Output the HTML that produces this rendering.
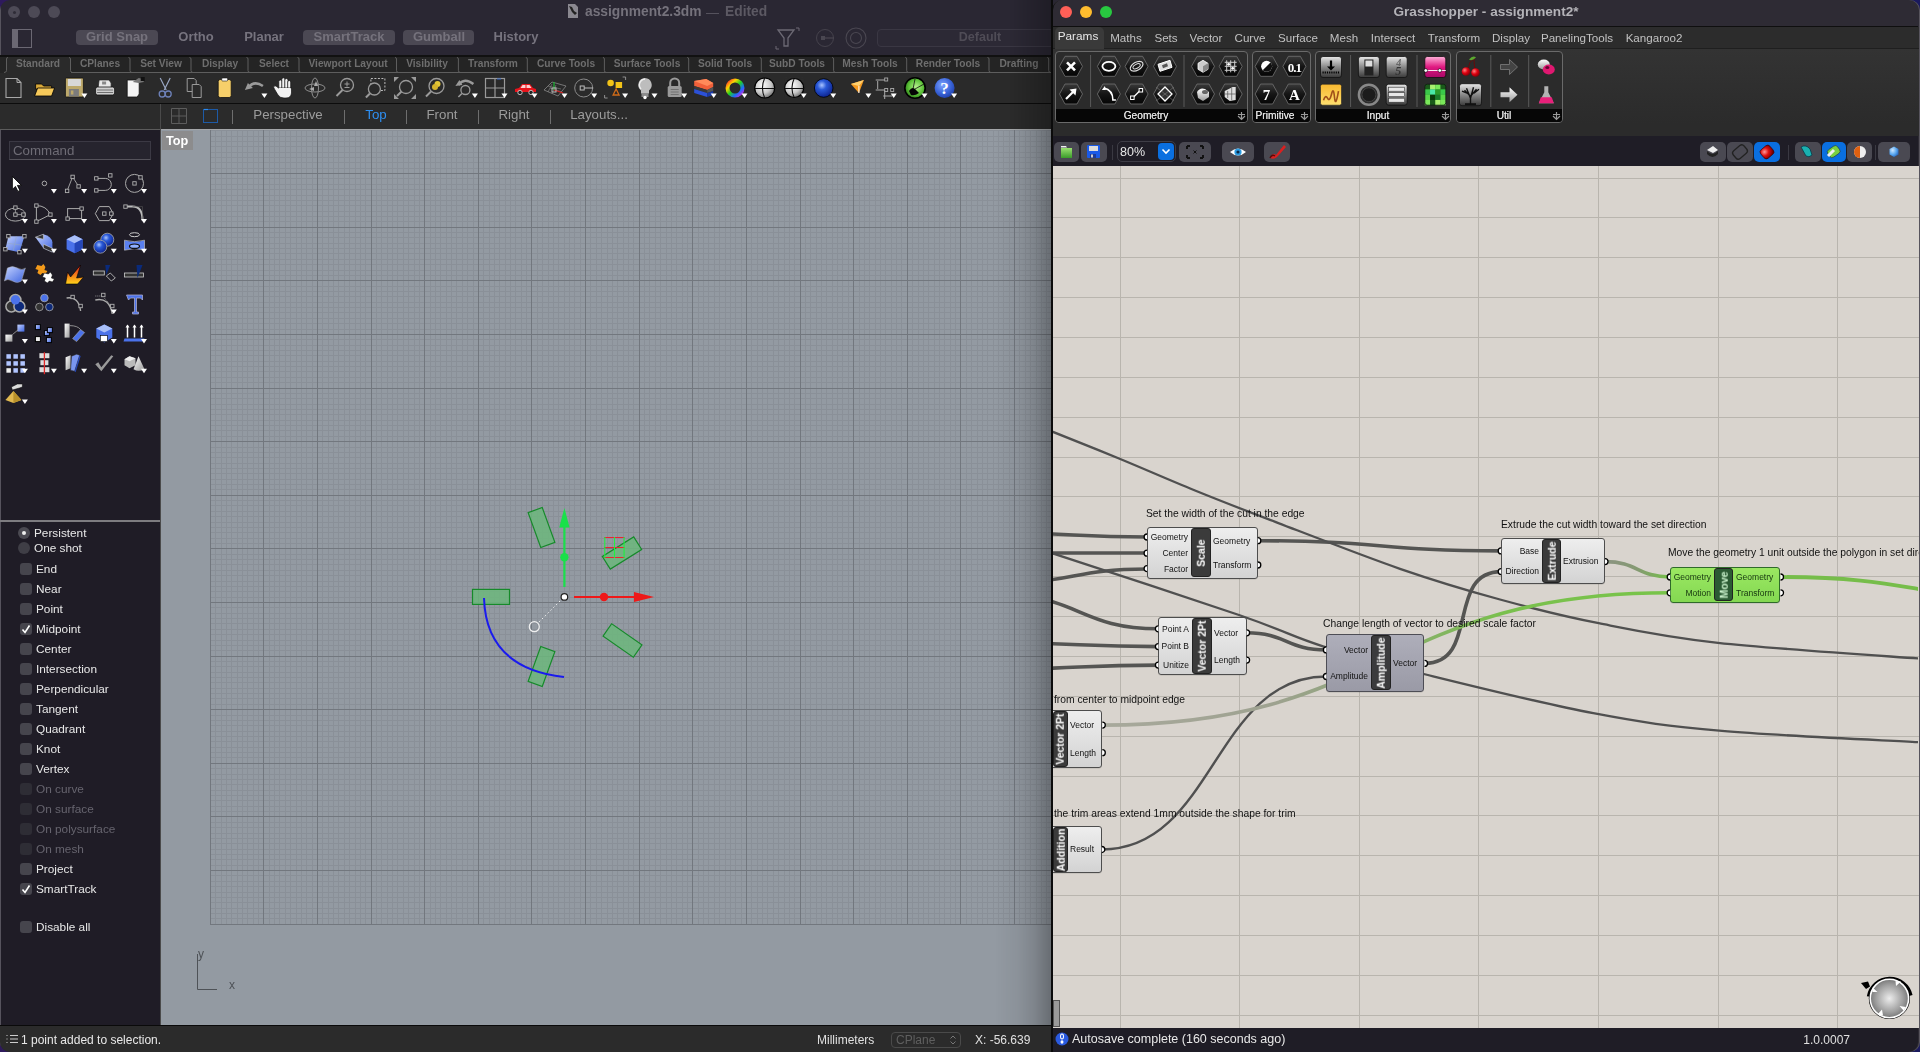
<!DOCTYPE html>
<html><head><meta charset="utf-8"><title>Rhino + Grasshopper</title>
<style>
*{margin:0;padding:0;box-sizing:border-box}
html,body{width:1920px;height:1055px;overflow:hidden;background:#fff;font-family:"Liberation Sans", sans-serif}
.a{position:absolute}
.t{position:absolute;white-space:nowrap;will-change:transform}
</style></head><body>

<div class="a" style="left:0;top:0;width:1070px;height:1052px;background:#2e1a5c"></div>
<div class="a" style="left:0;top:0;width:1070px;height:1052px;background:#2a2733;border-radius:10px;overflow:hidden">
<div class="a" style="left:0;top:0;width:1px;height:1052px;background:#56535d"></div>
<div class="a" style="left:8px;top:6px;width:12px;height:12px;border-radius:6px;background:#4d4a56"></div>
<div class="a" style="left:28px;top:6px;width:12px;height:12px;border-radius:6px;background:#4d4a56"></div>
<div class="a" style="left:48px;top:6px;width:12px;height:12px;border-radius:6px;background:#4d4a56"></div>
<div class="a" style="left:12.5px;top:10.5px;width:3px;height:3px;border-radius:2px;background:#2f2c37"></div>
<svg class="a" style="left:566px;top:3px" width="14" height="16"><path d="M2 1h7l3 3v11H2z" fill="#8a8890"/><path d="M3 3l3 1 2 4 3 2-2 2-3-3z" fill="#222"/></svg>
<div class="t" style="left:585.4px;top:5.3px;font-size:13.8px;line-height:13.8px;color:#75727c;font-weight:bold;">assignment2.3dm</div>
<div class="t" style="left:706.2px;top:5.7px;font-size:13px;line-height:13px;color:#5c5963;font-weight:normal;">—</div>
<div class="t" style="left:724.6px;top:5.3px;font-size:13.8px;line-height:13.8px;color:#5c5963;font-weight:bold;">Edited</div>
<div class="a" style="left:12px;top:29px;width:20px;height:19px;border:1.5px solid #6b6873"></div>
<div class="a" style="left:12px;top:29px;width:6px;height:19px;background:#6b6873"></div>
<div class="a" style="left:76px;top:30px;width:82px;height:15px;border-radius:4px;background:#4b4853"></div><div class="t" style="left:117.0px;top:30.1px;font-size:13px;line-height:13px;color:#75727c;font-weight:bold;transform:translateX(-50%);">Grid Snap</div>
<div class="t" style="left:196.0px;top:30.1px;font-size:13px;line-height:13px;color:#76737e;font-weight:bold;transform:translateX(-50%);">Ortho</div>
<div class="t" style="left:264.0px;top:30.1px;font-size:13px;line-height:13px;color:#76737e;font-weight:bold;transform:translateX(-50%);">Planar</div>
<div class="a" style="left:303px;top:30px;width:92px;height:15px;border-radius:4px;background:#4b4853"></div><div class="t" style="left:349.0px;top:30.1px;font-size:13px;line-height:13px;color:#75727c;font-weight:bold;transform:translateX(-50%);">SmartTrack</div>
<div class="a" style="left:403px;top:30px;width:71px;height:15px;border-radius:4px;background:#4b4853"></div><div class="t" style="left:438.5px;top:30.1px;font-size:13px;line-height:13px;color:#75727c;font-weight:bold;transform:translateX(-50%);">Gumball</div>
<div class="t" style="left:516.0px;top:30.1px;font-size:13px;line-height:13px;color:#76737e;font-weight:bold;transform:translateX(-50%);">History</div>
<svg class="a" style="left:775px;top:26px" width="28" height="24"><path d="M3 4h16l-6 8v8h-4v-8z" fill="none" stroke="#6c6974" stroke-width="1.3"/><path d="M21 2h3v3M1 20v3h3" stroke="#6c6974" fill="none" stroke-width="1"/></svg>
<svg class="a" style="left:814px;top:27px" width="24" height="22"><circle cx="11" cy="11" r="8.5" fill="none" stroke="#45424c" stroke-width="1"/><path d="M8 11h12" stroke="#4a4751" stroke-width="1.2"/><rect x="7" y="9" width="4" height="4" fill="#4a4751"/></svg>
<svg class="a" style="left:844px;top:27px" width="24" height="22"><circle cx="12" cy="11" r="10" fill="none" stroke="#4a4751" stroke-width="1.1"/><circle cx="12" cy="11" r="5.5" fill="none" stroke="#4a4751" stroke-width="1.1"/></svg>
<div class="a" style="left:877px;top:29px;width:190px;height:18px;border:1px solid #3a3743;border-radius:4px;background:#2c2935"></div>
<div class="t" style="left:980px;top:31.2px;font-size:12.5px;line-height:12.5px;color:#4f4c56;font-weight:bold;transform:translateX(-50%);">Default</div>
<div class="a" style="left:0;top:55px;width:1070px;height:2px;background:#111"></div>
<div class="a" style="left:0;top:57px;width:1070px;height:16px;background:#242424"></div>
<div class="a" style="left:6px;top:57px;width:64px;height:16px;background:#2a2a2a"></div>
<div class="a" style="left:71px;top:72px;width:1000px;height:1px;background:#5e5e5e"></div>
<svg class="a" style="left:0;top:0" width="1060" height="80"><path d="M4 72.5q2.5 0 2.5-2V59q0-1.5 1.5-1.5M69.0 57.5q1.5 0 1.5 1.5V70.5q0 2 2 2M128.5 57.5q1.5 0 1.5 1.5V70.5q0 2 2 2M189.5 57.5q1.5 0 1.5 1.5V70.5q0 2 2 2M246.5 57.5q1.5 0 1.5 1.5V70.5q0 2 2 2M297.5 57.5q1.5 0 1.5 1.5V70.5q0 2 2 2M395.0 57.5q1.5 0 1.5 1.5V70.5q0 2 2 2M456.9 57.5q1.5 0 1.5 1.5V70.5q0 2 2 2M525.8 57.5q1.5 0 1.5 1.5V70.5q0 2 2 2M602.9 57.5q1.5 0 1.5 1.5V70.5q0 2 2 2M687.2 57.5q1.5 0 1.5 1.5V70.5q0 2 2 2M759.8 57.5q1.5 0 1.5 1.5V70.5q0 2 2 2M832.1 57.5q1.5 0 1.5 1.5V70.5q0 2 2 2M905.2 57.5q1.5 0 1.5 1.5V70.5q0 2 2 2M987.5 57.5q1.5 0 1.5 1.5V70.5q0 2 2 2M1047.2 57.5q1.5 0 1.5 1.5V70.5q0 2 2 2" stroke="#5e5e5e" stroke-width="1" fill="none"/></svg>
<div class="t" style="left:38.25px;top:59.1px;font-size:10.2px;line-height:10.2px;color:#6e6e6e;font-weight:bold;transform:translateX(-50%);">Standard</div>
<div class="t" style="left:100.25px;top:59.1px;font-size:10.2px;line-height:10.2px;color:#6e6e6e;font-weight:bold;transform:translateX(-50%);">CPlanes</div>
<div class="t" style="left:160.5px;top:59.1px;font-size:10.2px;line-height:10.2px;color:#6e6e6e;font-weight:bold;transform:translateX(-50%);">Set View</div>
<div class="t" style="left:219.5px;top:59.1px;font-size:10.2px;line-height:10.2px;color:#6e6e6e;font-weight:bold;transform:translateX(-50%);">Display</div>
<div class="t" style="left:273.5px;top:59.1px;font-size:10.2px;line-height:10.2px;color:#6e6e6e;font-weight:bold;transform:translateX(-50%);">Select</div>
<div class="t" style="left:347.75px;top:59.1px;font-size:10.2px;line-height:10.2px;color:#6e6e6e;font-weight:bold;transform:translateX(-50%);">Viewport Layout</div>
<div class="t" style="left:427.45px;top:59.1px;font-size:10.2px;line-height:10.2px;color:#6e6e6e;font-weight:bold;transform:translateX(-50%);">Visibility</div>
<div class="t" style="left:492.84999999999997px;top:59.1px;font-size:10.2px;line-height:10.2px;color:#6e6e6e;font-weight:bold;transform:translateX(-50%);">Transform</div>
<div class="t" style="left:565.8499999999999px;top:59.1px;font-size:10.2px;line-height:10.2px;color:#6e6e6e;font-weight:bold;transform:translateX(-50%);">Curve Tools</div>
<div class="t" style="left:646.55px;top:59.1px;font-size:10.2px;line-height:10.2px;color:#6e6e6e;font-weight:bold;transform:translateX(-50%);">Surface Tools</div>
<div class="t" style="left:725.0px;top:59.1px;font-size:10.2px;line-height:10.2px;color:#6e6e6e;font-weight:bold;transform:translateX(-50%);">Solid Tools</div>
<div class="t" style="left:797.45px;top:59.1px;font-size:10.2px;line-height:10.2px;color:#6e6e6e;font-weight:bold;transform:translateX(-50%);">SubD Tools</div>
<div class="t" style="left:870.1500000000001px;top:59.1px;font-size:10.2px;line-height:10.2px;color:#6e6e6e;font-weight:bold;transform:translateX(-50%);">Mesh Tools</div>
<div class="t" style="left:947.85px;top:59.1px;font-size:10.2px;line-height:10.2px;color:#6e6e6e;font-weight:bold;transform:translateX(-50%);">Render Tools</div>
<div class="t" style="left:1018.85px;top:59.1px;font-size:10.2px;line-height:10.2px;color:#6e6e6e;font-weight:bold;transform:translateX(-50%);">Drafting</div>
<div class="a" style="left:0;top:73px;width:1070px;height:30px;background:#2a2a2a"></div>
<div class="a" style="left:0;top:103px;width:1070px;height:1.5px;background:#0c0c0c"></div>
<svg class="a" style="left:0;top:74px" width="1052" height="30" viewBox="0 74 1052 30"><defs>
<linearGradient id="rb" x1="0" y1="0" x2="1" y2="1"><stop offset="0" stop-color="#ff2a2a"/><stop offset=".25" stop-color="#ffd400"/><stop offset=".5" stop-color="#20d020"/><stop offset=".75" stop-color="#1a6aff"/><stop offset="1" stop-color="#e020e0"/></linearGradient>
<radialGradient id="sph" cx=".4" cy=".35" r=".7"><stop offset="0" stop-color="#ffffff"/><stop offset=".6" stop-color="#c8c8c8"/><stop offset="1" stop-color="#6a6a6a"/></radialGradient>
<radialGradient id="bsph" cx=".4" cy=".35" r=".7"><stop offset="0" stop-color="#a9c4ff"/><stop offset=".35" stop-color="#2a5ad8"/><stop offset="1" stop-color="#0a1e88"/></radialGradient>
<radialGradient id="gsph" cx=".55" cy=".45" r=".6"><stop offset="0" stop-color="#b8f090"/><stop offset=".6" stop-color="#5cc238"/><stop offset="1" stop-color="#2a7a18"/></radialGradient>
<radialGradient id="hsph" cx=".4" cy=".35" r=".7"><stop offset="0" stop-color="#7ea4ff"/><stop offset=".6" stop-color="#3a64d8"/><stop offset="1" stop-color="#1e3ea8"/></radialGradient>
<linearGradient id="blu" x1="0" y1="0" x2="1" y2="1"><stop offset="0" stop-color="#c4d2ff"/><stop offset="1" stop-color="#3d64e0"/></linearGradient>
<linearGradient id="wht" x1="0" y1="0" x2="1" y2="1"><stop offset="0" stop-color="#ffffff"/><stop offset="1" stop-color="#9a9a9a"/></linearGradient>
<linearGradient id="fire" x1="0" y1="0" x2="0" y2="1"><stop offset="0" stop-color="#e8201a"/><stop offset="1" stop-color="#ffd21a"/></linearGradient>
</defs><g transform="translate(2.5,76.0)"><path d="M3.5 2.5h11l4 4v15h-15z" fill="none" stroke="#a8a8a8" stroke-width="1.1"/><path d="M14.5 2.5v4h4" fill="none" stroke="#a8a8a8" stroke-width="1"/></g><g transform="translate(32.6,76.0)"><path d="M3 8h6l2 2h8v3H3z" fill="#d9a93a" stroke="#000" stroke-width="0.8"/><path d="M2 20l3-8h17l-3 8z" fill="#f6c95a" stroke="#000" stroke-width="0.8"/></g><g transform="translate(62.9,76.0)"><rect x="2.5" y="2" width="18" height="19" rx="1" fill="#bda96b" stroke="#111" stroke-width="0.8"/><rect x="5" y="3" width="13" height="7" fill="#d8d8d8"/><rect x="6" y="13" width="10" height="7.5" fill="#7c7c7c"/><rect x="8" y="14.5" width="2.5" height="4" fill="#bda96b"/><path d="M18.5 17.5h6l-3 4.5z" fill="#fff"/></g><g transform="translate(93.1,76.0)"><path d="M6 4h10l2 3v5H5z" fill="#e8e8e8" stroke="#222" stroke-width="0.7"/><rect x="2.5" y="11" width="19" height="8" rx="2" fill="#d0d0d0" stroke="#111" stroke-width="0.8"/><path d="M4 14h16M4 16.5h16" stroke="#555" stroke-width="0.8"/><rect x="9" y="5.5" width="4" height="3" fill="#888"/></g><g transform="translate(123.7,76.0)"><path d="M3.5 4h12v14l-2 3h-10z" fill="#f4f4f4" stroke="#111" stroke-width="0.8"/><path d="M9 6l6-4 5 1v3l-5 1z" fill="#777"/><rect x="17" y="1" width="4" height="4" fill="#111"/></g><g transform="translate(153.2,76.0)"><path d="M7 2l6 12M17 2l-6 12" stroke="#9aa7c4" stroke-width="1.2"/><circle cx="9" cy="18" r="3" fill="none" stroke="#6d81b8" stroke-width="1.3"/><circle cx="15" cy="18" r="3" fill="none" stroke="#6d81b8" stroke-width="1.3"/></g><g transform="translate(182.7,76.0)"><path d="M4.5 2.5h7l2 2v11h-9z" fill="none" stroke="#9a9a9a" stroke-width="1"/><path d="M9.5 8.5h7l2 2v11h-9z" fill="#2a2a2a" stroke="#9a9a9a" stroke-width="1"/></g><g transform="translate(212.7,76.0)"><rect x="5.5" y="3.5" width="13" height="18" rx="2" fill="#f6cf6a" stroke="#111" stroke-width="0.8"/><rect x="9" y="2" width="6" height="3" rx="1" fill="#fff" stroke="#111" stroke-width="0.6"/></g><g transform="translate(242.9,76.0)"><path d="M5 12q6-8 15-2" fill="none" stroke="#9a9a9a" stroke-width="2.6"/><path d="M2 14l3-7 5 5z" fill="#9a9a9a"/><path d="M18.5 17.5h6l-3 4.5z" fill="#fff"/></g><g transform="translate(272.5,76.0)"><g fill="#f2f2f2" stroke="#111" stroke-width="0.7"><rect x="6.3" y="4" width="3.2" height="11" rx="1.6"/><rect x="9.3" y="1.8" width="3.2" height="12" rx="1.6"/><rect x="12.3" y="2.5" width="3.2" height="12" rx="1.6"/><rect x="15.2" y="4.5" width="3" height="11" rx="1.5"/><path d="M6 12q-3-3-4.5-2-1 1 1 4l3 5q2 3 6 3h2q5 0 5.5-5v-5H6z"/></g><path d="M6.5 13h11.5" stroke="#f2f2f2" stroke-width="2"/></g><g transform="translate(303.0,76.0)"><ellipse cx="12" cy="12" rx="10" ry="4" fill="none" stroke="#8d8d8d" stroke-width="1"/><ellipse cx="12" cy="12" rx="3.5" ry="10" fill="none" stroke="#8d8d8d" stroke-width="1"/><path d="M13 5l2 5h-4z" fill="#aaa"/><path d="M6 13l5-2v4z" fill="#aaa"/></g><g transform="translate(333.0,76.0)"><circle cx="14" cy="9" r="6.5" fill="none" stroke="#9a9a9a" stroke-width="1.3"/><path d="M9.5 14l-6 6" stroke="#9a9a9a" stroke-width="2"/><path d="M11.5 8h5M14 5.5v5M11.5 11.5h5" stroke="#9a9a9a" stroke-width="1"/></g><g transform="translate(363.4,76.0)"><rect x="7.5" y="2.5" width="14" height="12" fill="none" stroke="#bbb" stroke-width="1" stroke-dasharray="2 1.5"/><circle cx="11" cy="13" r="6" fill="#2a2a2a" stroke="#9a9a9a" stroke-width="1.3"/><path d="M6.5 17.5l-4 4" stroke="#9a9a9a" stroke-width="2"/></g><g transform="translate(393.0,76.0)"><circle cx="13" cy="11" r="6.5" fill="none" stroke="#9a9a9a" stroke-width="1.3"/><path d="M8.5 15.5l-4.5 4.5" stroke="#9a9a9a" stroke-width="2"/><path d="M1 1h5l-5 5zM23 1h-5l5 5zM1 23h5l-5-5zM23 23h-5l5-5z" fill="#9a9a9a"/></g><g transform="translate(422.5,76.0)"><circle cx="14" cy="10" r="7.5" fill="none" stroke="#9a9a9a" stroke-width="1.3"/><path d="M8.5 15.5l-5 5" stroke="#9a9a9a" stroke-width="2"/><circle cx="15" cy="8" r="3" fill="#e3c636"/><circle cx="12.5" cy="11" r="3" fill="#d6b42c"/></g><g transform="translate(453.4,76.0)"><path d="M5 9q6-8 15-1" fill="none" stroke="#9a9a9a" stroke-width="2.4"/><path d="M2 10l4-6 3 5z" fill="#9a9a9a"/><circle cx="12" cy="14" r="4.5" fill="none" stroke="#9a9a9a" stroke-width="1.3"/><path d="M8.5 17.5l-3.5 3.5" stroke="#9a9a9a" stroke-width="1.6"/><path d="M18.5 17.5h6l-3 4.5z" fill="#fff"/></g><g transform="translate(483.0,76.0)"><rect x="2.5" y="2.5" width="19" height="19" fill="none" stroke="#9a9a9a" stroke-width="1.2"/><path d="M12 2.5v19M2.5 12h19" stroke="#9a9a9a" stroke-width="1.2"/><path d="M14 3h4" stroke="#2b61c4" stroke-width="1"/><path d="M18.5 17.5h6l-3 4.5z" fill="#fff"/></g><g transform="translate(513.0,76.0)"><path d="M2 16v-3l4-1 3-4h8l3 4 3 1v3z" fill="#e8141c"/><path d="M9.5 9h3v3h-5zM13.5 9h3l2 3h-5z" fill="#fff" opacity=".8"/><circle cx="7" cy="16.5" r="2.2" fill="#222" stroke="#ddd" stroke-width="0.8"/><circle cx="18" cy="16.5" r="2.2" fill="#222" stroke="#ddd" stroke-width="0.8"/><path d="M18.5 17.5h6l-3 4.5z" fill="#fff"/></g><g transform="translate(543.0,76.0)"><path d="M1 14l8-8 14 4-8 10z" fill="none" stroke="#888" stroke-width="0.8"/><path d="M5 10l13 3M9 8l-4 8M13 9l-4 9M7 12l12 4" stroke="#888" stroke-width="0.6"/><path d="M11 14V6" stroke="#19b832" stroke-width="1.2"/><path d="M11 14l9 3" stroke="#d81d1d" stroke-width="1.2"/><rect x="9" y="12" width="4" height="4" fill="none" stroke="#bbb" stroke-width="1"/><path d="M18.5 17.5h6l-3 4.5z" fill="#fff"/></g><g transform="translate(572.7,76.0)"><circle cx="11" cy="12" r="9" fill="none" stroke="#8a8a8a" stroke-width="1"/><rect x="7.5" y="10" width="4" height="4" fill="none" stroke="#bbb" stroke-width="1"/><path d="M11.5 12h9" stroke="#bbb" stroke-width="1"/><path d="M18.5 17.5h6l-3 4.5z" fill="#fff"/></g><g transform="translate(603.6,76.0)"><circle cx="7" cy="7" r="3.3" fill="#f2c318"/><rect x="12" y="6" width="6.5" height="6" fill="#f2c318"/><path d="M9.5 19h6l-3-6z" fill="none" stroke="#d06b18" stroke-width="1.3"/><path d="M19 1h3v3M1 19v3h3" stroke="#999" fill="none" stroke-width="0.9"/><path d="M18.5 17.5h6l-3 4.5z" fill="#fff"/></g><g transform="translate(633.0,76.0)"><path d="M12 2a7 7 0 0 1 4 12.5v3h-8v-3A7 7 0 0 1 12 2z" fill="#bdbdbd"/><path d="M12 3a6 6 0 0 0-4 10" fill="none" stroke="#eee" stroke-width="1.3"/><rect x="8.5" y="17" width="7" height="4" fill="#8a8a8a"/><circle cx="12" cy="21.5" r="1.7" fill="#fff"/><path d="M18.5 17.5h6l-3 4.5z" fill="#fff"/></g><g transform="translate(662.7,76.0)"><path d="M7.5 10V7a4.5 4.5 0 0 1 9 0v3" fill="none" stroke="#9a9a9a" stroke-width="2"/><rect x="5" y="10" width="14" height="11" rx="1.5" fill="#9a9a9a"/><path d="M8 13.5h8M8 16h8M8 18.5h8" stroke="#6d6d6d" stroke-width="0.9"/><path d="M18.5 17.5h6l-3 4.5z" fill="#fff"/></g><g transform="translate(692.2,76.0)"><path d="M2 5l12-2 7 4v4l-6 3-13-4z" fill="#f0603a"/><path d="M2 10l13 4v3L2 13z" fill="#3a3a3a"/><path d="M2 13l13 4v4L2 17z" fill="#2c51d8"/><path d="M15 14l6-3v4l-6 2z" fill="#555"/><path d="M15 17l6-2v4l-6 2z" fill="#1a3aa8"/><path d="M2 5l12-2 7 4-6 3z" fill="#ff8a5a"/><path d="M18.5 17.5h6l-3 4.5z" fill="#fff"/></g><g transform="translate(723.0,76.0)"><circle cx="12" cy="12" r="7.5" fill="none" stroke="url(#rb)" stroke-width="4"/><path d="M18.5 17.5h6l-3 4.5z" fill="#fff"/></g><g transform="translate(752.7,76.0)"><circle cx="12" cy="12" r="10" fill="url(#sph)" stroke="#000" stroke-width="1.2"/><path d="M2 12.5h20M12 2q-4.5 10 0 20" stroke="#111" stroke-width="1.1" fill="none"/></g><g transform="translate(782.2,76.0)"><path d="M1 4h22M1 8h22M1 16h22M1 20h22M4 1v22M8 1v22M16 1v22M20 1v22" stroke="#333" stroke-width="0.6" stroke-dasharray="1 1"/><circle cx="12" cy="12" r="9.5" fill="url(#sph)" stroke="#000" stroke-width="1.2"/><path d="M2.5 12.5h19M12 2.5q-4.5 9.5 0 19" stroke="#111" stroke-width="1.1" fill="none"/><path d="M18.5 17.5h6l-3 4.5z" fill="#fff"/></g><g transform="translate(811.7,76.0)"><circle cx="12" cy="12" r="9.3" fill="url(#bsph)" stroke="#000" stroke-width="0.8"/><path d="M18.5 17.5h6l-3 4.5z" fill="#fff"/></g><g transform="translate(846.9,76.0)"><path d="M4 8l13-4-5 13z" fill="#f59a20"/><path d="M4 8l8 2 5-6z" fill="#ffd070"/><path d="M12 10l0 7" stroke="#fff" stroke-width="1"/><path d="M18.5 17.5h6l-3 4.5z" fill="#fff"/></g><g transform="translate(872.2,76.0)"><path d="M3.5 4h9M3.5 14h9M12.5 14v9M11 20h9" stroke="#aaa" stroke-width="1" fill="none"/><path d="M5.5 5v8" stroke="#aaa" stroke-width="1"/><rect x="12.5" y="2" width="3" height="3" fill="none" stroke="#aaa" stroke-width="0.9"/><rect x="12.5" y="12.5" width="3" height="3" fill="none" stroke="#aaa" stroke-width="0.9"/><rect x="18.5" y="12.5" width="3" height="3" fill="none" stroke="#aaa" stroke-width="0.9"/><path d="M18.5 17.5h6l-3 4.5z" fill="#fff"/></g><g transform="translate(903.0,76.0)"><circle cx="12" cy="12" r="10.2" fill="url(#gsph)" stroke="#000" stroke-width="1.6"/><path d="M6 15q3-5 6-2 2 2 4 4-4 3-8 2z" fill="#050505"/><path d="M12 3l-2 10M21 8l-9 5" stroke="#111" stroke-width="0.8"/><path d="M18.5 17.5h6l-3 4.5z" fill="#fff"/></g><g transform="translate(932.6,76.0)"><circle cx="12" cy="12" r="10" fill="url(#hsph)"/><text x="12" y="18" font-family="Liberation Serif" font-weight="bold" font-size="17" fill="#fff" text-anchor="middle">?</text><path d="M18.5 17.5h6l-3 4.5z" fill="#fff"/></g></svg>
<div class="a" style="left:0;top:104px;width:1070px;height:25px;background:#2b2b2b"></div>
<div class="a" style="left:0;top:129px;width:161px;height:1px;background:#5c5c5c"></div>
<div class="a" style="left:160px;top:104px;width:1px;height:921px;background:#4a4a4a"></div>
<svg class="a" style="left:170px;top:107px" width="52" height="18"><path d="M1.5 1.5h15v15h-15zM9 1.5v15M1.5 9h15" stroke="#5d5d5d" stroke-width="1" fill="none"/><rect x="33.5" y="2.5" width="14" height="13" stroke="#1d5aa6" stroke-width="1" fill="none"/><path d="M34 2.5h4" stroke="#2a8af0" stroke-width="1.2"/></svg>
<div class="a" style="left:232px;top:110px;width:1px;height:14px;background:#6e6e6e"></div>
<div class="a" style="left:344px;top:110px;width:1px;height:14px;background:#6e6e6e"></div>
<div class="a" style="left:406px;top:110px;width:1px;height:14px;background:#6e6e6e"></div>
<div class="a" style="left:478px;top:110px;width:1px;height:14px;background:#6e6e6e"></div>
<div class="a" style="left:550px;top:110px;width:1px;height:14px;background:#6e6e6e"></div>
<div class="t" style="left:287.5px;top:107.8px;font-size:13.3px;line-height:13.3px;color:#9c9c9c;font-weight:normal;transform:translateX(-50%);">Perspective</div>
<div class="t" style="left:375.5px;top:107.8px;font-size:13.3px;line-height:13.3px;color:#2e8ff2;font-weight:normal;transform:translateX(-50%);">Top</div>
<div class="t" style="left:441.7px;top:107.8px;font-size:13.3px;line-height:13.3px;color:#9c9c9c;font-weight:normal;transform:translateX(-50%);">Front</div>
<div class="t" style="left:513.6px;top:107.8px;font-size:13.3px;line-height:13.3px;color:#9c9c9c;font-weight:normal;transform:translateX(-50%);">Right</div>
<div class="t" style="left:599px;top:107.8px;font-size:13.3px;line-height:13.3px;color:#9c9c9c;font-weight:normal;transform:translateX(-50%);">Layouts...</div>
<div class="a" style="left:0;top:130px;width:160px;height:895px;background:#1f1c26"></div>
<div class="a" style="left:0;top:130px;width:1px;height:895px;background:#56535d"></div>
<div class="a" style="left:9px;top:141px;width:142px;height:19px;border:1px solid #3b3944;border-bottom-color:#55535b;background:#26242e"></div>
<div class="t" style="left:12.5px;top:143.9px;font-size:13.3px;line-height:13.3px;color:#6e6c75;font-weight:normal;">Command</div>
<div class="a" style="left:0;top:520px;width:160px;height:2px;background:#7d7c80"></div>
<svg class="a" style="left:0;top:165px" width="160" height="245" viewBox="0 165 160 245"><defs>
<linearGradient id="srb" x1="0" y1="0" x2="1" y2="1"><stop offset="0" stop-color="#ff2a2a"/><stop offset=".25" stop-color="#ffd400"/><stop offset=".5" stop-color="#20d020"/><stop offset=".75" stop-color="#1a6aff"/><stop offset="1" stop-color="#e020e0"/></linearGradient>
<radialGradient id="ssph" cx=".4" cy=".35" r=".7"><stop offset="0" stop-color="#ffffff"/><stop offset=".6" stop-color="#c8c8c8"/><stop offset="1" stop-color="#6a6a6a"/></radialGradient>
<radialGradient id="sbsph" cx=".4" cy=".35" r=".7"><stop offset="0" stop-color="#a9c4ff"/><stop offset=".35" stop-color="#2a5ad8"/><stop offset="1" stop-color="#0a1e88"/></radialGradient>
<radialGradient id="sgsph" cx=".55" cy=".45" r=".6"><stop offset="0" stop-color="#b8f090"/><stop offset=".6" stop-color="#5cc238"/><stop offset="1" stop-color="#2a7a18"/></radialGradient>
<radialGradient id="shsph" cx=".4" cy=".35" r=".7"><stop offset="0" stop-color="#7ea4ff"/><stop offset=".6" stop-color="#3a64d8"/><stop offset="1" stop-color="#1e3ea8"/></radialGradient>
<linearGradient id="sblu" x1="0" y1="0" x2="1" y2="1"><stop offset="0" stop-color="#c4d2ff"/><stop offset="1" stop-color="#3d64e0"/></linearGradient>
<linearGradient id="swht" x1="0" y1="0" x2="1" y2="1"><stop offset="0" stop-color="#ffffff"/><stop offset="1" stop-color="#9a9a9a"/></linearGradient>
<linearGradient id="sfire" x1="0" y1="0" x2="0" y2="1"><stop offset="0" stop-color="#e8201a"/><stop offset="1" stop-color="#ffd21a"/></linearGradient>
</defs><g transform="translate(3.4,171.4)"><path d="M9 5v13l3-3 2.5 5 2-1-2.5-5h4z" fill="#fff" stroke="#000" stroke-width="0.8"/></g><g transform="translate(32.4,171.4)"><circle cx="12" cy="12" r="2.3" fill="none" stroke="#aaa" stroke-width="1"/><path d="M18.5 17.5h6l-3 4.5z" fill="#fff"/></g><g transform="translate(62.6,171.4)"><path d="M4.5 19.5L10 5.5 16 15" fill="none" stroke="#aaa" stroke-width="0.9"/><rect x="2.8" y="17.8" width="3.4" height="3.4" fill="#1f1d27" stroke="#b0b0b0" stroke-width="0.9"/><rect x="8.3" y="3.8" width="3.4" height="3.4" fill="#1f1d27" stroke="#b0b0b0" stroke-width="0.9"/><rect x="14.3" y="13.3" width="3.4" height="3.4" fill="#1f1d27" stroke="#b0b0b0" stroke-width="0.9"/><path d="M18.5 17.5h6l-3 4.5z" fill="#fff"/></g><g transform="translate(92.3,171.4)"><path d="M4 7h9a6 6 0 0 1 0 12H4" fill="none" stroke="#aaa" stroke-width="1"/><rect x="2.3" y="5.3" width="3.4" height="3.4" fill="#1f1d27" stroke="#b0b0b0" stroke-width="0.9"/><rect x="2.3" y="17.3" width="3.4" height="3.4" fill="#1f1d27" stroke="#b0b0b0" stroke-width="0.9"/><rect x="16.3" y="2.3" width="3.4" height="3.4" fill="#1f1d27" stroke="#b0b0b0" stroke-width="0.9"/><path d="M18.5 17.5h6l-3 4.5z" fill="#fff"/></g><g transform="translate(122.5,171.4)"><circle cx="12" cy="12" r="9" fill="none" stroke="#aaa" stroke-width="1"/><rect x="10.3" y="10.3" width="3.4" height="3.4" fill="#1f1d27" stroke="#b0b0b0" stroke-width="0.9"/><rect x="16.3" y="4.3" width="3.4" height="3.4" fill="#1f1d27" stroke="#b0b0b0" stroke-width="0.9"/><path d="M18.5 17.5h6l-3 4.5z" fill="#fff"/></g><g transform="translate(3.4,201.6)"><ellipse cx="12" cy="13" rx="10" ry="6.5" fill="none" stroke="#aaa" stroke-width="1"/><path d="M12 6v7h6" stroke="#aaa" stroke-width="0.8" fill="none"/><rect x="10.3" y="4.3" width="3.4" height="3.4" fill="#1f1d27" stroke="#b0b0b0" stroke-width="0.9"/><rect x="10.3" y="11.3" width="3.4" height="3.4" fill="#1f1d27" stroke="#b0b0b0" stroke-width="0.9"/><rect x="18.3" y="11.3" width="3.4" height="3.4" fill="#1f1d27" stroke="#b0b0b0" stroke-width="0.9"/><path d="M18.5 17.5h6l-3 4.5z" fill="#fff"/></g><g transform="translate(32.4,201.6)"><path d="M4 4v16l14-7q-4-9-14-9" fill="none" stroke="#aaa" stroke-width="1"/><rect x="2.3" y="2.3" width="3.4" height="3.4" fill="#1f1d27" stroke="#b0b0b0" stroke-width="0.9"/><rect x="2.3" y="18.3" width="3.4" height="3.4" fill="#1f1d27" stroke="#b0b0b0" stroke-width="0.9"/><rect x="16.3" y="11.3" width="3.4" height="3.4" fill="#1f1d27" stroke="#b0b0b0" stroke-width="0.9"/><path d="M18.5 17.5h6l-3 4.5z" fill="#fff"/></g><g transform="translate(62.6,201.6)"><rect x="5" y="7" width="14" height="10" fill="none" stroke="#aaa" stroke-width="1"/><rect x="3.3" y="15.3" width="3.4" height="3.4" fill="#1f1d27" stroke="#b0b0b0" stroke-width="0.9"/><rect x="17.3" y="5.3" width="3.4" height="3.4" fill="#1f1d27" stroke="#b0b0b0" stroke-width="0.9"/><path d="M18.5 17.5h6l-3 4.5z" fill="#fff"/></g><g transform="translate(92.3,201.6)"><path d="M7 5h10l4 7-4 7H7l-4-7z" fill="none" stroke="#aaa" stroke-width="1"/><rect x="10.3" y="10.3" width="3.4" height="3.4" fill="#1f1d27" stroke="#b0b0b0" stroke-width="0.9"/><rect x="17.3" y="10.3" width="3.4" height="3.4" fill="#1f1d27" stroke="#b0b0b0" stroke-width="0.9"/><path d="M18.5 17.5h6l-3 4.5z" fill="#fff"/></g><g transform="translate(122.5,201.6)"><path d="M3 5h7q10 0 10 14" fill="none" stroke="#bbb" stroke-width="2"/><path d="M10 5h10v14" fill="none" stroke="#555" stroke-width="0.6"/><rect x="1.3" y="3.3" width="3.4" height="3.4" fill="#1f1d27" stroke="#b0b0b0" stroke-width="0.9"/><path d="M18.5 17.5h6l-3 4.5z" fill="#fff"/></g><g transform="translate(3.4,231.2)"><path d="M5 5l16 0-5 16-14-3z" fill="url(#sblu)"/><path d="M13 5l-3 14M4 12l15 2" stroke="#9ab" stroke-width="0.5"/><rect x="3.3" y="3.3" width="3.4" height="3.4" fill="#1f1d27" stroke="#b0b0b0" stroke-width="0.9"/><rect x="19.3" y="3.3" width="3.4" height="3.4" fill="#1f1d27" stroke="#b0b0b0" stroke-width="0.9"/><rect x="0.30000000000000004" y="16.3" width="3.4" height="3.4" fill="#1f1d27" stroke="#b0b0b0" stroke-width="0.9"/><rect x="14.3" y="19.3" width="3.4" height="3.4" fill="#1f1d27" stroke="#b0b0b0" stroke-width="0.9"/><path d="M18.5 17.5h6l-3 4.5z" fill="#fff"/></g><g transform="translate(32.4,231.2)"><path d="M3 6l8-3q8 2 9 8v10l-9-4z" fill="url(#sblu)"/><path d="M3 6l8-3 0 5z" fill="#333" stroke="#ccc" stroke-width="0.6"/><path d="M11 13l9 4v4l-9-4z" fill="#333" stroke="#ccc" stroke-width="0.6"/><path d="M18.5 17.5h6l-3 4.5z" fill="#fff"/></g><g transform="translate(62.6,231.2)"><path d="M4 8l8-4 8 4v10l-8 4-8-4z" fill="#4b72ea"/><path d="M4 8l8-4 8 4-8 4z" fill="#a9bff8"/><path d="M12 12v10l8-4V8z" fill="#2546b8"/><path d="M18.5 17.5h6l-3 4.5z" fill="#fff"/></g><g transform="translate(92.3,231.2)"><circle cx="15" cy="8.5" r="6.5" fill="url(#sbsph)" stroke="#aaa" stroke-width="0.8"/><circle cx="8" cy="15.5" r="6.5" fill="url(#sbsph)" stroke="#aaa" stroke-width="0.8"/><path d="M18.5 17.5h6l-3 4.5z" fill="#fff"/></g><g transform="translate(122.5,231.2)"><ellipse cx="12" cy="3.5" rx="5" ry="2" fill="none" stroke="#ccc" stroke-width="1"/><path d="M2 9q10 3 20 0v10q-10-3-20 0z" fill="#5a80f0" stroke="#ccc" stroke-width="0.6"/><ellipse cx="12" cy="15" rx="5" ry="2.2" fill="#8fb0ff" stroke="#111" stroke-width="1.2"/><path d="M18.5 17.5h6l-3 4.5z" fill="#fff"/></g><g transform="translate(3.4,262.0)"><path d="M4 6q5-3 10 0t8 0l-4 13q-4 3-9 0t-8 0z" fill="url(#sblu)" stroke="#aaa" stroke-width="0.5"/><path d="M18.5 17.5h6l-3 4.5z" fill="#fff"/></g><g transform="translate(32.4,262.0)"><path d="M5 3l4 1 2-2 2 3-1 3 3 1-2 3-3-1-2 2-3-2 1-3-3-1z" fill="#f39a1a"/><path d="M12 11l4 1 2-2 2 3-1 3 3 1-2 3-3-1-2 2-3-2 1-3-3-1z" fill="#fff" stroke="#000" stroke-width="0.5"/></g><g transform="translate(62.6,262.0)"><path d="M3 22l2-12 3 5 10-12-4 13 7-1-6 7z" fill="url(#sfire)" stroke="#000" stroke-width="0.6"/></g><g transform="translate(92.3,262.0)"><rect x="1" y="9" width="11" height="4" fill="#333" stroke="#ccc" stroke-width="0.8"/><path d="M13 3h5l-4 10z" fill="#0a2a7a"/><path d="M14 14l4-3 5 5-4 3z" fill="none" stroke="#ccc" stroke-width="0.8"/></g><g transform="translate(122.5,262.0)"><rect x="2" y="11" width="19" height="4" fill="#333" stroke="#ccc" stroke-width="0.8"/><path d="M14 3h6l-5 13z" fill="#0a2a7a"/></g><g transform="translate(3.4,292.0)"><circle cx="12" cy="8" r="5.5" fill="#4b72ea" stroke="#aaa" stroke-width="1.5"/><circle cx="8" cy="14.5" r="5.5" fill="#333" stroke="#aaa" stroke-width="1.5"/><circle cx="16" cy="14.5" r="5.5" fill="#0e2a7a" stroke="#aaa" stroke-width="1.5"/><circle cx="12" cy="8" r="4.5" fill="#4b72ea"/><path d="M18.5 17.5h6l-3 4.5z" fill="#fff"/></g><g transform="translate(32.4,292.0)"><circle cx="12" cy="6" r="3.8" fill="#4b72ea" stroke="#aaa" stroke-width="0.8"/><circle cx="7" cy="15" r="3.8" fill="#333" stroke="#aaa" stroke-width="0.8"/><circle cx="17" cy="15" r="3.8" fill="#0e2a7a" stroke="#aaa" stroke-width="0.8"/></g><g transform="translate(62.6,292.0)"><path d="M4 6q12-2 14 13" fill="none" stroke="#aaa" stroke-width="1.4"/><rect x="8.3" y="3.3" width="3.4" height="3.4" fill="#1f1d27" stroke="#b0b0b0" stroke-width="0.9"/><rect x="16.3" y="12.3" width="3.4" height="3.4" fill="#1f1d27" stroke="#b0b0b0" stroke-width="0.9"/></g><g transform="translate(92.3,292.0)"><path d="M3 8q14-3 17 14" fill="none" stroke="#aaa" stroke-width="1.4"/><path d="M3 4h6M12 6l7 8" stroke="#aaa" stroke-width="0.8" stroke-dasharray="1 1"/><rect x="9.3" y="1.3" width="3.4" height="3.4" fill="#1f1d27" stroke="#b0b0b0" stroke-width="0.9"/><rect x="18.3" y="12.3" width="3.4" height="3.4" fill="#1f1d27" stroke="#b0b0b0" stroke-width="0.9"/><path d="M18.5 17.5h6l-3 4.5z" fill="#fff"/></g><g transform="translate(122.5,292.0)"><path d="M4 3h16v5l-2-2h-4v14h2v2H10v-2h2V6H8L6 8z" fill="#4b72ea" stroke="#aac" stroke-width="0.8"/></g><g transform="translate(3.4,321.6)"><rect x="2" y="13" width="7" height="7" fill="url(#swht)"/><rect x="14" y="3" width="7" height="7" fill="url(#sblu)"/><path d="M9 13l6-5" stroke="#aaa" stroke-width="0.8"/><path d="M18.5 17.5h6l-3 4.5z" fill="#fff"/></g><g transform="translate(32.4,321.6)"><rect x="3" y="3" width="5" height="5" fill="url(#sblu)" stroke="#000"/><rect x="12" y="9" width="5" height="5" fill="url(#sblu)" stroke="#000"/><rect x="15" y="6" width="5" height="5" fill="url(#sblu)" stroke="#000"/><rect x="3" y="15" width="5" height="5" fill="#eee" stroke="#000"/><rect x="14" y="16" width="5" height="5" fill="url(#sblu)" stroke="#000"/></g><g transform="translate(62.6,321.6)"><rect x="2" y="2" width="5" height="14" fill="url(#swht)"/><path d="M10 17l8-9 4 3-8 9z" fill="#4b72ea" stroke="#aaa" stroke-width="0.6"/><path d="M7 4q8 0 11 4" fill="none" stroke="#aaa" stroke-width="0.8"/></g><g transform="translate(92.3,321.6)"><path d="M4 7l8-4 8 4v9l-8 5-8-5z" fill="#4b72ea"/><path d="M4 7l8-4 8 4-8 4z" fill="#a9bff8"/><rect x="8" y="14" width="7" height="6" fill="#fff" stroke="#000" stroke-width="0.6"/><path d="M18.5 17.5h6l-3 4.5z" fill="#fff"/></g><g transform="translate(122.5,321.6)"><path d="M5 4v12M12 4v12M19 4v12" stroke="#fff" stroke-width="1.5"/><path d="M3 6l2-3 2 3zM10 6l2-3 2 3zM17 6l2-3 2 3z" fill="#fff"/><path d="M2 17h20l-2 3H1z" fill="#4b72ea"/><path d="M18.5 17.5h6l-3 4.5z" fill="#fff"/></g><g transform="translate(3.4,351.2)"><rect x="3" y="3" width="4.5" height="4.5" fill="#b0c4ff"/><rect x="3" y="10" width="4.5" height="4.5" fill="#b0c4ff"/><rect x="3" y="17" width="4.5" height="4.5" fill="#eee"/><rect x="10" y="3" width="4.5" height="4.5" fill="#b0c4ff"/><rect x="10" y="10" width="4.5" height="4.5" fill="#b0c4ff"/><rect x="10" y="17" width="4.5" height="4.5" fill="#b0c4ff"/><rect x="17" y="3" width="4.5" height="4.5" fill="#b0c4ff"/><rect x="17" y="10" width="4.5" height="4.5" fill="#b0c4ff"/><rect x="17" y="17" width="4.5" height="4.5" fill="#b0c4ff"/><path d="M18.5 17.5h6l-3 4.5z" fill="#fff"/></g><g transform="translate(32.4,351.2)"><rect x="7" y="2" width="10" height="5" fill="#ddd"/><rect x="8" y="9" width="8" height="5" fill="#ddd"/><rect x="7" y="16" width="10" height="5" fill="#ddd"/><path d="M12 1v22" stroke="#e02828" stroke-width="1.3"/><path d="M18.5 17.5h6l-3 4.5z" fill="#fff"/></g><g transform="translate(62.6,351.2)"><path d="M3 6l5-2v13l-5 2z" fill="url(#swht)"/><path d="M9 5l5-2 3 1-5 16-4-1z" fill="#7a96f0" stroke="#333" stroke-width="0.5"/><path d="M17 4l1 1-5 16-1-1z" fill="#2546b8"/><path d="M18.5 17.5h6l-3 4.5z" fill="#fff"/></g><g transform="translate(92.3,351.2)"><path d="M3 13l3-2 3 5 10-12 2 1-12 15z" fill="#9a9a9a"/><path d="M18.5 17.5h6l-3 4.5z" fill="#fff"/></g><g transform="translate(122.5,351.2)"><path d="M2 8l5-3 6 2v7l-6 3-5-3z" fill="#bbb"/><path d="M7 5l6 2-6 3-5-2z" fill="#eee"/><path d="M16 5l6 13q-6 3-11 0z" fill="url(#swht)"/><path d="M18.5 17.5h6l-3 4.5z" fill="#fff"/></g><g transform="translate(3.4,382.0)"><path d="M2 18l8-9 8 9-8 3z" fill="#e0b850"/><path d="M10 9l8 9-8 3z" fill="#b8902a"/><path d="M8 5l6-3h5v3l-3 1-7 2z" fill="#ddd" stroke="#000" stroke-width="0.5"/><path d="M18.5 17.5h6l-3 4.5z" fill="#fff"/></g></svg>
<div class="a" style="left:18px;top:527px;width:12px;height:12px;border-radius:6px;background:#4b4a52"></div>
<div class="a" style="left:22px;top:531px;width:4px;height:4px;border-radius:2px;background:#eee"></div>
<div class="a" style="left:18px;top:542px;width:12px;height:12px;border-radius:6px;background:#3f3e46"></div>
<div class="t" style="left:34px;top:527.7px;font-size:11.8px;line-height:11.8px;color:#e8e8e8;font-weight:normal;">Persistent</div>
<div class="t" style="left:34px;top:543.1px;font-size:11.8px;line-height:11.8px;color:#e8e8e8;font-weight:normal;">One shot</div>
<div class="a" style="left:20px;top:563px;width:12px;height:12px;border-radius:3px;background:#46454d"></div>
<div class="t" style="left:36px;top:563.9px;font-size:11.8px;line-height:11.8px;color:#e8e8e8;font-weight:normal;">End</div>
<div class="a" style="left:20px;top:583px;width:12px;height:12px;border-radius:3px;background:#46454d"></div>
<div class="t" style="left:36px;top:583.9px;font-size:11.8px;line-height:11.8px;color:#e8e8e8;font-weight:normal;">Near</div>
<div class="a" style="left:20px;top:603px;width:12px;height:12px;border-radius:3px;background:#46454d"></div>
<div class="t" style="left:36px;top:603.9px;font-size:11.8px;line-height:11.8px;color:#e8e8e8;font-weight:normal;">Point</div>
<div class="a" style="left:20px;top:623px;width:12px;height:12px;border-radius:3px;background:#46454d"></div>
<svg class="a" style="left:20px;top:623px" width="12" height="12"><path d="M2.5 6.5l2.5 3 4.5-7" stroke="#fff" stroke-width="1.6" fill="none"/></svg>
<div class="t" style="left:36px;top:623.9px;font-size:11.8px;line-height:11.8px;color:#e8e8e8;font-weight:normal;">Midpoint</div>
<div class="a" style="left:20px;top:643px;width:12px;height:12px;border-radius:3px;background:#46454d"></div>
<div class="t" style="left:36px;top:643.9px;font-size:11.8px;line-height:11.8px;color:#e8e8e8;font-weight:normal;">Center</div>
<div class="a" style="left:20px;top:663px;width:12px;height:12px;border-radius:3px;background:#46454d"></div>
<div class="t" style="left:36px;top:663.9px;font-size:11.8px;line-height:11.8px;color:#e8e8e8;font-weight:normal;">Intersection</div>
<div class="a" style="left:20px;top:683px;width:12px;height:12px;border-radius:3px;background:#46454d"></div>
<div class="t" style="left:36px;top:683.9px;font-size:11.8px;line-height:11.8px;color:#e8e8e8;font-weight:normal;">Perpendicular</div>
<div class="a" style="left:20px;top:703px;width:12px;height:12px;border-radius:3px;background:#46454d"></div>
<div class="t" style="left:36px;top:703.9px;font-size:11.8px;line-height:11.8px;color:#e8e8e8;font-weight:normal;">Tangent</div>
<div class="a" style="left:20px;top:723px;width:12px;height:12px;border-radius:3px;background:#46454d"></div>
<div class="t" style="left:36px;top:723.9px;font-size:11.8px;line-height:11.8px;color:#e8e8e8;font-weight:normal;">Quadrant</div>
<div class="a" style="left:20px;top:743px;width:12px;height:12px;border-radius:3px;background:#46454d"></div>
<div class="t" style="left:36px;top:743.9px;font-size:11.8px;line-height:11.8px;color:#e8e8e8;font-weight:normal;">Knot</div>
<div class="a" style="left:20px;top:763px;width:12px;height:12px;border-radius:3px;background:#46454d"></div>
<div class="t" style="left:36px;top:763.9px;font-size:11.8px;line-height:11.8px;color:#e8e8e8;font-weight:normal;">Vertex</div>
<div class="a" style="left:20px;top:783px;width:12px;height:12px;border-radius:3px;background:#2e2d35"></div>
<div class="t" style="left:36px;top:783.9px;font-size:11.8px;line-height:11.8px;color:#66646e;font-weight:normal;">On curve</div>
<div class="a" style="left:20px;top:803px;width:12px;height:12px;border-radius:3px;background:#2e2d35"></div>
<div class="t" style="left:36px;top:803.9px;font-size:11.8px;line-height:11.8px;color:#66646e;font-weight:normal;">On surface</div>
<div class="a" style="left:20px;top:823px;width:12px;height:12px;border-radius:3px;background:#2e2d35"></div>
<div class="t" style="left:36px;top:823.9px;font-size:11.8px;line-height:11.8px;color:#66646e;font-weight:normal;">On polysurface</div>
<div class="a" style="left:20px;top:843px;width:12px;height:12px;border-radius:3px;background:#2e2d35"></div>
<div class="t" style="left:36px;top:843.9px;font-size:11.8px;line-height:11.8px;color:#66646e;font-weight:normal;">On mesh</div>
<div class="a" style="left:20px;top:863px;width:12px;height:12px;border-radius:3px;background:#46454d"></div>
<div class="t" style="left:36px;top:863.9px;font-size:11.8px;line-height:11.8px;color:#e8e8e8;font-weight:normal;">Project</div>
<div class="a" style="left:20px;top:883px;width:12px;height:12px;border-radius:3px;background:#46454d"></div>
<svg class="a" style="left:20px;top:883px" width="12" height="12"><path d="M2.5 6.5l2.5 3 4.5-7" stroke="#fff" stroke-width="1.6" fill="none"/></svg>
<div class="t" style="left:36px;top:883.9px;font-size:11.8px;line-height:11.8px;color:#e8e8e8;font-weight:normal;">SmartTrack</div>
<div class="a" style="left:20px;top:921px;width:12px;height:12px;border-radius:3px;background:#46454d"></div>
<div class="t" style="left:36px;top:921.9px;font-size:11.8px;line-height:11.8px;color:#e8e8e8;font-weight:normal;">Disable all</div>
<div class="a" style="left:161px;top:130px;width:900px;height:895px;background:#939aa2"></div>
<svg class="a" style="left:0;top:0" width="1060" height="1055" shape-rendering="crispEdges"><path d="M215.5 130V924M221.5 130V924M226.5 130V924M231.5 130V924M237.5 130V924M242.5 130V924M247.5 130V924M253.5 130V924M258.5 130V924M269.5 130V924M274.5 130V924M279.5 130V924M285.5 130V924M290.5 130V924M296.5 130V924M301.5 130V924M306.5 130V924M312.5 130V924M322.5 130V924M328.5 130V924M333.5 130V924M338.5 130V924M344.5 130V924M349.5 130V924M355.5 130V924M360.5 130V924M365.5 130V924M376.5 130V924M381.5 130V924M387.5 130V924M392.5 130V924M397.5 130V924M403.5 130V924M408.5 130V924M414.5 130V924M419.5 130V924M430.5 130V924M435.5 130V924M440.5 130V924M446.5 130V924M451.5 130V924M456.5 130V924M462.5 130V924M467.5 130V924M473.5 130V924M483.5 130V924M489.5 130V924M494.5 130V924M499.5 130V924M505.5 130V924M510.5 130V924M515.5 130V924M521.5 130V924M526.5 130V924M537.5 130V924M542.5 130V924M548.5 130V924M553.5 130V924M558.5 130V924M564.5 130V924M569.5 130V924M574.5 130V924M580.5 130V924M590.5 130V924M596.5 130V924M601.5 130V924M607.5 130V924M612.5 130V924M617.5 130V924M623.5 130V924M628.5 130V924M633.5 130V924M644.5 130V924M649.5 130V924M655.5 130V924M660.5 130V924M666.5 130V924M671.5 130V924M676.5 130V924M682.5 130V924M687.5 130V924M698.5 130V924M703.5 130V924M708.5 130V924M714.5 130V924M719.5 130V924M725.5 130V924M730.5 130V924M735.5 130V924M741.5 130V924M751.5 130V924M757.5 130V924M762.5 130V924M767.5 130V924M773.5 130V924M778.5 130V924M784.5 130V924M789.5 130V924M794.5 130V924M805.5 130V924M810.5 130V924M816.5 130V924M821.5 130V924M826.5 130V924M832.5 130V924M837.5 130V924M842.5 130V924M848.5 130V924M859.5 130V924M864.5 130V924M869.5 130V924M875.5 130V924M880.5 130V924M885.5 130V924M891.5 130V924M896.5 130V924M901.5 130V924M912.5 130V924M918.5 130V924M923.5 130V924M928.5 130V924M934.5 130V924M939.5 130V924M944.5 130V924M950.5 130V924M955.5 130V924M966.5 130V924M971.5 130V924M977.5 130V924M982.5 130V924M987.5 130V924M993.5 130V924M998.5 130V924M1003.5 130V924M1009.5 130V924M1019.5 130V924M1025.5 130V924M1030.5 130V924M1036.5 130V924M1041.5 130V924M1046.5 130V924M1052.5 130V924M210 130.5H1052M210 136.5H1052M210 141.5H1052M210 146.5H1052M210 152.5H1052M210 157.5H1052M210 162.5H1052M210 168.5H1052M210 178.5H1052M210 184.5H1052M210 189.5H1052M210 195.5H1052M210 200.5H1052M210 205.5H1052M210 211.5H1052M210 216.5H1052M210 221.5H1052M210 232.5H1052M210 237.5H1052M210 243.5H1052M210 248.5H1052M210 253.5H1052M210 259.5H1052M210 264.5H1052M210 270.5H1052M210 275.5H1052M210 286.5H1052M210 291.5H1052M210 296.5H1052M210 302.5H1052M210 307.5H1052M210 312.5H1052M210 318.5H1052M210 323.5H1052M210 329.5H1052M210 339.5H1052M210 345.5H1052M210 350.5H1052M210 355.5H1052M210 361.5H1052M210 366.5H1052M210 371.5H1052M210 377.5H1052M210 382.5H1052M210 393.5H1052M210 398.5H1052M210 404.5H1052M210 409.5H1052M210 414.5H1052M210 420.5H1052M210 425.5H1052M210 430.5H1052M210 436.5H1052M210 447.5H1052M210 452.5H1052M210 457.5H1052M210 463.5H1052M210 468.5H1052M210 473.5H1052M210 479.5H1052M210 484.5H1052M210 489.5H1052M210 500.5H1052M210 505.5H1052M210 511.5H1052M210 516.5H1052M210 522.5H1052M210 527.5H1052M210 532.5H1052M210 538.5H1052M210 543.5H1052M210 554.5H1052M210 559.5H1052M210 564.5H1052M210 570.5H1052M210 575.5H1052M210 581.5H1052M210 586.5H1052M210 591.5H1052M210 597.5H1052M210 607.5H1052M210 613.5H1052M210 618.5H1052M210 623.5H1052M210 629.5H1052M210 634.5H1052M210 640.5H1052M210 645.5H1052M210 650.5H1052M210 661.5H1052M210 666.5H1052M210 672.5H1052M210 677.5H1052M210 682.5H1052M210 688.5H1052M210 693.5H1052M210 698.5H1052M210 704.5H1052M210 715.5H1052M210 720.5H1052M210 725.5H1052M210 731.5H1052M210 736.5H1052M210 741.5H1052M210 747.5H1052M210 752.5H1052M210 757.5H1052M210 768.5H1052M210 774.5H1052M210 779.5H1052M210 784.5H1052M210 790.5H1052M210 795.5H1052M210 800.5H1052M210 806.5H1052M210 811.5H1052M210 822.5H1052M210 827.5H1052M210 833.5H1052M210 838.5H1052M210 843.5H1052M210 849.5H1052M210 854.5H1052M210 859.5H1052M210 865.5H1052M210 875.5H1052M210 881.5H1052M210 886.5H1052M210 892.5H1052M210 897.5H1052M210 902.5H1052M210 908.5H1052M210 913.5H1052M210 918.5H1052" stroke="#8a9098" stroke-width="1" fill="none"/><path d="M210.5 130V924M263.5 130V924M317.5 130V924M371.5 130V924M424.5 130V924M478.5 130V924M531.5 130V924M585.5 130V924M639.5 130V924M692.5 130V924M746.5 130V924M800.5 130V924M853.5 130V924M907.5 130V924M960.5 130V924M1014.5 130V924M210 173.5H1052M210 227.5H1052M210 280.5H1052M210 334.5H1052M210 388.5H1052M210 441.5H1052M210 495.5H1052M210 548.5H1052M210 602.5H1052M210 656.5H1052M210 709.5H1052M210 763.5H1052M210 816.5H1052M210 870.5H1052M210 924.5H1052" stroke="#72777e" stroke-width="1" fill="none"/></svg>
<div class="a" style="left:162px;top:131px;width:31px;height:18.5px;background:#8c8c8d"></div>
<div class="t" style="left:166px;top:134.5px;font-size:12.7px;line-height:12.7px;color:#fff;font-weight:bold;">Top</div>
<div class="a" style="left:161px;top:129px;width:891px;height:1px;background:#a4a6a9"></div>
<svg class="a" style="left:190px;top:945px" width="50" height="50"><path d="M7.5 9V44.5H27" stroke="#4e5257" stroke-width="1" fill="none"/></svg>
<div class="t" style="left:198px;top:948.0px;font-size:12px;line-height:12px;color:#4e5257;font-weight:normal;">y</div>
<div class="t" style="left:229px;top:979.0px;font-size:12px;line-height:12px;color:#4e5257;font-weight:normal;">x</div>
<svg class="a" style="left:440px;top:490px" width="240" height="210" viewBox="440 490 240 210"><rect x="-18.5" y="-7.5" width="37" height="15" transform="translate(491.0 596.9) rotate(0)" fill="#6cb77c" fill-opacity="0.85" stroke="#168a2a" stroke-width="1.2"/><rect x="-7.5" y="-18.5" width="15" height="37" transform="translate(541.5 527.5) rotate(-20)" fill="#6cb77c" fill-opacity="0.85" stroke="#168a2a" stroke-width="1.2"/><rect x="-18.5" y="-7.5" width="37" height="15" transform="translate(622.0 553.0) rotate(-32)" fill="#6cb77c" fill-opacity="0.85" stroke="#168a2a" stroke-width="1.2"/><rect x="-18.5" y="-7.5" width="37" height="15" transform="translate(622.5 640.5) rotate(35)" fill="#6cb77c" fill-opacity="0.85" stroke="#168a2a" stroke-width="1.2"/><rect x="-7.5" y="-18.5" width="15" height="37" transform="translate(541.5 666.5) rotate(20)" fill="#6cb77c" fill-opacity="0.85" stroke="#168a2a" stroke-width="1.2"/><path d="M484 598Q486 668 564 677" fill="none" stroke="#1a1aee" stroke-width="2"/><path d="M604 537.5h20.5M604 547.5h20.5M604 557.5h20.5" stroke="#ee2030" stroke-width="1.1"/><path d="M604.8 537v21M614.5 537v21M624.1 537v21" stroke="#20f040" stroke-width="1.1"/><path d="M564.4 587V526" stroke="#19e04a" stroke-width="2.2"/><path d="M559.2 527.5l5.2-19.5 5.2 19.5z" fill="#19e04a"/><circle cx="564.4" cy="557.2" r="4.2" fill="#19e04a"/><path d="M574 597H636" stroke="#ee1818" stroke-width="2.2"/><path d="M634 592l20 5-20 5z" fill="#ee1818"/><circle cx="604" cy="597" r="4.2" fill="#ee1818"/><path d="M560 601l-21 21" stroke="#eee" stroke-width="1" stroke-dasharray="1.5 2.5"/><circle cx="534.3" cy="626.7" r="5" fill="none" stroke="#f0f0f0" stroke-width="1.2"/><circle cx="564.4" cy="596.9" r="3.3" fill="#fff" stroke="#222" stroke-width="1.2"/></svg>
<div class="a" style="left:995px;top:130px;width:57px;height:895px;background:linear-gradient(90deg,rgba(0,0,0,0),rgba(0,0,0,.05) 40%,rgba(0,0,0,.14) 70%,rgba(0,0,0,.30))"></div>
<div class="a" style="left:1010px;top:0;width:42px;height:130px;background:linear-gradient(90deg,rgba(0,0,0,0),rgba(0,0,0,.25))"></div>
<div class="a" style="left:0;top:1025px;width:1070px;height:1px;background:#0a0a0a"></div>
<div class="a" style="left:0;top:1026px;width:1070px;height:27px;background:#2b2b2b"></div>
<svg class="a" style="left:5px;top:1033px" width="14" height="12"><path d="M5 2.5h8M5 6h8M5 9.5h8" stroke="#ccc" stroke-width="1"/><path d="M1.5 2.5h1M1.5 6h1M1.5 9.5h1" stroke="#ccc" stroke-width="1"/></svg>
<div class="t" style="left:21px;top:1034.0px;font-size:12px;line-height:12px;color:#e8e8e8;font-weight:normal;">1 point added to selection.</div>
<div class="t" style="left:817px;top:1034.0px;font-size:12px;line-height:12px;color:#e0e0e0;font-weight:normal;">Millimeters</div>
<div class="a" style="left:891px;top:1032px;width:70px;height:16px;border:1px solid #4a4a4a;border-radius:4px"></div>
<div class="t" style="left:896px;top:1034.0px;font-size:12px;line-height:12px;color:#5f5f5f;font-weight:normal;">CPlane</div>
<svg class="a" style="left:949px;top:1034px" width="8" height="12"><path d="M1.5 4.5l2.5-2.5 2.5 2.5M1.5 7.5l2.5 2.5 2.5-2.5" stroke="#777" stroke-width="1" fill="none"/></svg>
<div class="t" style="left:975px;top:1034.0px;font-size:12px;line-height:12px;color:#e0e0e0;font-weight:normal;">X: -56.639</div>
</div>
<div class="a" style="left:1890px;top:0;width:30px;height:1052px;background:#1b1a5e"></div>
<div class="a" style="left:1052px;top:0;width:868px;height:1052px;background:#57545d;border-radius:10px;overflow:hidden"></div>
<div class="a" style="left:1052px;top:0;width:867px;height:1052px;background:#2e2b34;border-radius:10px;overflow:hidden;border-left:1px solid #0b0b0b">
</div>
<div class="a" style="left:1060px;top:6px;width:12px;height:12px;border-radius:6px;background:#fe5f57"></div>
<div class="a" style="left:1080px;top:6px;width:12px;height:12px;border-radius:6px;background:#febc2e"></div>
<div class="a" style="left:1100px;top:6px;width:12px;height:12px;border-radius:6px;background:#28c840"></div>
<div class="t" style="left:1486px;top:4.5px;font-size:13.6px;line-height:13.6px;color:#b4b3b8;font-weight:bold;transform:translateX(-50%);">Grasshopper - assignment2*</div>
<div class="a" style="left:1053px;top:25.5px;width:865px;height:1.5px;background:#0f0f0f"></div>
<div class="a" style="left:1053px;top:27px;width:866px;height:21px;background:#2c2c2c"></div>
<div class="a" style="left:1053px;top:47.5px;width:866px;height:1px;background:#1f1f1f"></div>
<div class="a" style="left:1053px;top:48.5px;width:866px;height:87.5px;background:linear-gradient(#333333,#2b2b2b 86%,#2b2b2b)"></div>
<div class="a" style="left:1055px;top:27px;width:49px;height:22px;border-radius:5px 5px 0 0;background:#3a3a3a"></div>
<div class="t" style="left:1078px;top:31.1px;font-size:11.8px;line-height:11.8px;color:#e6e6e6;font-weight:normal;transform:translateX(-50%);">Params</div>
<div class="t" style="left:1125.5px;top:32.2px;font-size:11.6px;line-height:11.6px;color:#c2c2c2;font-weight:normal;transform:translateX(-50%);">Maths</div>
<div class="t" style="left:1165.5px;top:32.2px;font-size:11.6px;line-height:11.6px;color:#c2c2c2;font-weight:normal;transform:translateX(-50%);">Sets</div>
<div class="t" style="left:1206px;top:32.2px;font-size:11.6px;line-height:11.6px;color:#c2c2c2;font-weight:normal;transform:translateX(-50%);">Vector</div>
<div class="t" style="left:1250px;top:32.2px;font-size:11.6px;line-height:11.6px;color:#c2c2c2;font-weight:normal;transform:translateX(-50%);">Curve</div>
<div class="t" style="left:1297.5px;top:32.2px;font-size:11.6px;line-height:11.6px;color:#c2c2c2;font-weight:normal;transform:translateX(-50%);">Surface</div>
<div class="t" style="left:1344px;top:32.2px;font-size:11.6px;line-height:11.6px;color:#c2c2c2;font-weight:normal;transform:translateX(-50%);">Mesh</div>
<div class="t" style="left:1393px;top:32.2px;font-size:11.6px;line-height:11.6px;color:#c2c2c2;font-weight:normal;transform:translateX(-50%);">Intersect</div>
<div class="t" style="left:1453.5px;top:32.2px;font-size:11.6px;line-height:11.6px;color:#c2c2c2;font-weight:normal;transform:translateX(-50%);">Transform</div>
<div class="t" style="left:1510.5px;top:32.2px;font-size:11.6px;line-height:11.6px;color:#c2c2c2;font-weight:normal;transform:translateX(-50%);">Display</div>
<div class="t" style="left:1577px;top:32.2px;font-size:11.6px;line-height:11.6px;color:#c2c2c2;font-weight:normal;transform:translateX(-50%);">PanelingTools</div>
<div class="t" style="left:1654px;top:32.2px;font-size:11.6px;line-height:11.6px;color:#c2c2c2;font-weight:normal;transform:translateX(-50%);">Kangaroo2</div>
<div class="a" style="left:1055.0px;top:51.4px;width:192.7px;height:72px;border:1px solid #6a6a6a;border-radius:4px;background:#2b2b2b;overflow:hidden"><div class="a" style="left:0;bottom:0;width:100%;height:13.5px;background:#060606"></div></div>
<div class="t" style="left:1145.8px;top:110.8px;font-size:10.2px;line-height:10.2px;color:#e0e0e0;font-weight:normal;transform:translateX(-50%);text-shadow:0 0 0.4px #ddd;">Geometry</div>
<svg class="a" style="left:1236.7px;top:111px" width="9" height="10"><path d="M4.5 1v7M1 5l3.5 3.5L8 5M1 3.5h7" stroke="#9a9a9a" stroke-width="1.2" fill="none"/></svg>
<div class="a" style="left:1251.7px;top:51.4px;width:58.9px;height:72px;border:1px solid #6a6a6a;border-radius:4px;background:#2b2b2b;overflow:hidden"><div class="a" style="left:0;bottom:0;width:100%;height:13.5px;background:#060606"></div></div>
<div class="t" style="left:1275.4px;top:110.8px;font-size:10.2px;line-height:10.2px;color:#e0e0e0;font-weight:normal;transform:translateX(-50%);text-shadow:0 0 0.4px #ddd;">Primitive</div>
<svg class="a" style="left:1299.6px;top:111px" width="9" height="10"><path d="M4.5 1v7M1 5l3.5 3.5L8 5M1 3.5h7" stroke="#9a9a9a" stroke-width="1.2" fill="none"/></svg>
<div class="a" style="left:1315.4px;top:51.4px;width:136.1px;height:72px;border:1px solid #6a6a6a;border-radius:4px;background:#2b2b2b;overflow:hidden"><div class="a" style="left:0;bottom:0;width:100%;height:13.5px;background:#060606"></div></div>
<div class="t" style="left:1377.7px;top:110.8px;font-size:10.2px;line-height:10.2px;color:#e0e0e0;font-weight:normal;transform:translateX(-50%);text-shadow:0 0 0.4px #ddd;">Input</div>
<svg class="a" style="left:1440.5px;top:111px" width="9" height="10"><path d="M4.5 1v7M1 5l3.5 3.5L8 5M1 3.5h7" stroke="#9a9a9a" stroke-width="1.2" fill="none"/></svg>
<div class="a" style="left:1455.6px;top:51.4px;width:107.6px;height:72px;border:1px solid #6a6a6a;border-radius:4px;background:#2b2b2b;overflow:hidden"><div class="a" style="left:0;bottom:0;width:100%;height:13.5px;background:#060606"></div></div>
<div class="t" style="left:1504.3px;top:110.8px;font-size:10.2px;line-height:10.2px;color:#e0e0e0;font-weight:normal;transform:translateX(-50%);text-shadow:0 0 0.4px #ddd;">Util</div>
<svg class="a" style="left:1552.2px;top:111px" width="9" height="10"><path d="M4.5 1v7M1 5l3.5 3.5L8 5M1 3.5h7" stroke="#9a9a9a" stroke-width="1.2" fill="none"/></svg>
<svg class="a" style="left:1052px;top:48px" width="520" height="80" viewBox="1052 48 520 80"><defs>
<linearGradient id="hx" x1="0" y1="0" x2="0" y2="1"><stop offset="0" stop-color="#3a3a3a"/><stop offset=".5" stop-color="#151515"/><stop offset="1" stop-color="#050505"/></linearGradient>
<linearGradient id="gsq" x1="0" y1="0" x2="0" y2="1"><stop offset="0" stop-color="#e8e8e8"/><stop offset=".5" stop-color="#8a8a8a"/><stop offset="1" stop-color="#3a3a3a"/></linearGradient>
<linearGradient id="pink" x1="0" y1="0" x2="0" y2="1"><stop offset="0" stop-color="#ffb0d8"/><stop offset=".5" stop-color="#e01880"/><stop offset="1" stop-color="#a80868"/></linearGradient>
<linearGradient id="yel" x1="0" y1="0" x2="0" y2="1"><stop offset="0" stop-color="#f8b830"/><stop offset="1" stop-color="#ffe070"/></linearGradient>
<radialGradient id="chr" cx=".35" cy=".35" r=".7"><stop offset="0" stop-color="#ff8080"/><stop offset=".5" stop-color="#e00010"/><stop offset="1" stop-color="#800008"/></radialGradient>
<linearGradient id="arr" x1="0" y1="0" x2="0" y2="1"><stop offset="0" stop-color="#ffffff"/><stop offset="1" stop-color="#9a9a9a"/></linearGradient>
</defs><g transform="translate(1059.0,54.3)"><path d="M6 2h12l5.5 10L18 22H6L0.5 12z" fill="url(#hx)" stroke="#6a6a6a" stroke-width="0.9"/><path d="M8 8l8 8M16 8l-8 8" stroke="#fff" stroke-width="2.6"/></g><g transform="translate(1059.0,82.0)"><path d="M6 2h12l5.5 10L18 22H6L0.5 12z" fill="url(#hx)" stroke="#6a6a6a" stroke-width="0.9"/><path d="M7 17l9-9" stroke="#fff" stroke-width="2.2"/><path d="M17.5 6.5l-1 7-6-6z" fill="#fff"/></g><g transform="translate(1096.9,54.3)"><path d="M6 2h12l5.5 10L18 22H6L0.5 12z" fill="url(#hx)" stroke="#6a6a6a" stroke-width="0.9"/><ellipse cx="12" cy="12" rx="6.5" ry="4.5" fill="none" stroke="#fff" stroke-width="1.8"/></g><g transform="translate(1096.9,82.0)"><path d="M6 2h12l5.5 10L18 22H6L0.5 12z" fill="url(#hx)" stroke="#6a6a6a" stroke-width="0.9"/><path d="M7 6q9 2 9 12h3" fill="none" stroke="#fff" stroke-width="1.6"/><path d="M5 8l3-4 1 4z" fill="#fff"/></g><g transform="translate(1124.6,54.3)"><path d="M6 2h12l5.5 10L18 22H6L0.5 12z" fill="url(#hx)" stroke="#6a6a6a" stroke-width="0.9"/><ellipse cx="12" cy="12" rx="7" ry="4" transform="rotate(-30 12 12)" fill="none" stroke="#ddd" stroke-width="1.2"/><ellipse cx="12" cy="12" rx="4" ry="2" transform="rotate(-30 12 12)" fill="none" stroke="#ddd" stroke-width="1"/></g><g transform="translate(1124.6,82.0)"><path d="M6 2h12l5.5 10L18 22H6L0.5 12z" fill="url(#hx)" stroke="#6a6a6a" stroke-width="0.9"/><path d="M8 16l8-8" stroke="#fff" stroke-width="1.3"/><rect x="6" y="14" width="3.5" height="3.5" fill="#111" stroke="#fff" stroke-width="1"/><rect x="14.5" y="6.5" width="3.5" height="3.5" fill="#111" stroke="#fff" stroke-width="1"/></g><g transform="translate(1153.0,54.3)"><path d="M6 2h12l5.5 10L18 22H6L0.5 12z" fill="url(#hx)" stroke="#6a6a6a" stroke-width="0.9"/><path d="M5 10l12-4 2 7-12 4z" fill="#ddd" stroke="#fff" stroke-width="1"/><path d="M9 11l5-2 1 3-5 2z" fill="#555"/></g><g transform="translate(1153.0,82.0)"><path d="M6 2h12l5.5 10L18 22H6L0.5 12z" fill="url(#hx)" stroke="#6a6a6a" stroke-width="0.9"/><path d="M12 5l7 7-7 7-7-7z" fill="#333" stroke="#fff" stroke-width="1.3"/><path d="M3 5l18 14M21 5L3 19" stroke="#888" stroke-width="0.5"/></g><g transform="translate(1191.0,54.3)"><path d="M6 2h12l5.5 10L18 22H6L0.5 12z" fill="url(#hx)" stroke="#6a6a6a" stroke-width="0.9"/><path d="M7 9l5-3 5 3v6l-5 3-5-3z" fill="#ccc" stroke="#fff" stroke-width="0.8"/><path d="M12 12v6l5-3V9z" fill="#888"/></g><g transform="translate(1191.0,82.0)"><path d="M6 2h12l5.5 10L18 22H6L0.5 12z" fill="url(#hx)" stroke="#6a6a6a" stroke-width="0.9"/><path d="M6 10q3-5 8-3l4 3v5l-6 4-5-3z" fill="url(#arr)"/><ellipse cx="14" cy="10" rx="3" ry="2" fill="#666"/></g><g transform="translate(1218.7,54.3)"><path d="M6 2h12l5.5 10L18 22H6L0.5 12z" fill="url(#hx)" stroke="#6a6a6a" stroke-width="0.9"/><path d="M6 8h12M6 12h12M6 16h12M8 6v12M12 6v12M16 6v12" stroke="#ccc" stroke-width="1" /><circle cx="10" cy="10" r="1.4" fill="#fff"/><circle cx="14" cy="14" r="1.4" fill="#fff"/></g><g transform="translate(1218.7,82.0)"><path d="M6 2h12l5.5 10L18 22H6L0.5 12z" fill="url(#hx)" stroke="#6a6a6a" stroke-width="0.9"/><path d="M6 9l8-4h3v13l-6 1-5-4z" fill="#ddd"/><path d="M9 9v7M13 6v12M6 12h11" stroke="#555" stroke-width="0.7"/></g><g transform="translate(1254.6,54.3)"><path d="M6 2h12l5.5 10L18 22H6L0.5 12z" fill="url(#hx)" stroke="#6a6a6a" stroke-width="0.9"/><circle cx="12" cy="12" r="5.5" fill="#fff"/><path d="M15.9 8.1a5.5 5.5 0 0 1-7.8 7.8z" fill="#111"/></g><g transform="translate(1254.6,82.0)"><path d="M6 2h12l5.5 10L18 22H6L0.5 12z" fill="url(#hx)" stroke="#6a6a6a" stroke-width="0.9"/><text x="12" y="18" font-family="Liberation Serif" font-weight="bold" font-size="15" fill="#fff" text-anchor="middle">7</text></g><g transform="translate(1282.4,54.3)"><path d="M6 2h12l5.5 10L18 22H6L0.5 12z" fill="url(#hx)" stroke="#6a6a6a" stroke-width="0.9"/><text x="12" y="17.5" font-family="Liberation Serif" font-weight="bold" font-size="13" fill="#fff" text-anchor="middle" letter-spacing="-1">0.1</text></g><g transform="translate(1282.4,82.0)"><path d="M6 2h12l5.5 10L18 22H6L0.5 12z" fill="url(#hx)" stroke="#6a6a6a" stroke-width="0.9"/><text x="12" y="18" font-family="Liberation Serif" font-weight="bold" font-size="15" fill="#fff" text-anchor="middle">A</text></g><g transform="translate(1319.5,55.5)"><rect x="1" y="1" width="21" height="21" rx="2.5" fill="url(#gsq)" stroke="#111" stroke-width="0.8"/><path d="M11.5 5v8" stroke="#000" stroke-width="2.2"/><path d="M7.5 11h8l-4 4z" fill="#000"/><path d="M3 17h17" stroke="#000" stroke-width="2" stroke-dasharray="1.2 1"/></g><g transform="translate(1319.5,83.2)"><rect x="1" y="1" width="21" height="21" rx="2" fill="url(#yel)" stroke="#222" stroke-width="0.6"/><path d="M4 17q2-6 4-2t4-4 3 3 4-6" fill="none" stroke="#a0501a" stroke-width="1.6"/></g><g transform="translate(1357.4,55.5)"><rect x="1" y="1" width="21" height="21" rx="2.5" fill="url(#gsq)" stroke="#111" stroke-width="0.8"/><rect x="7" y="4" width="9" height="16" fill="#222"/><rect x="8" y="5" width="7" height="6" fill="#ddd"/></g><g transform="translate(1357.4,83.2)"><circle cx="11.5" cy="11.5" r="10" fill="none" stroke="#888" stroke-width="2.5"/><circle cx="11.5" cy="11.5" r="7" fill="#1c1c1c" stroke="#444" stroke-width="1"/></g><g transform="translate(1385.2,55.5)"><rect x="1" y="1" width="21" height="21" rx="2.5" fill="url(#gsq)" stroke="#111" stroke-width="0.8"/><text x="10" y="19" font-family="Liberation Serif" font-style="italic" font-weight="bold" font-size="12" fill="#333">5</text><text x="11" y="10" font-family="Liberation Serif" font-style="italic" font-weight="bold" font-size="10" fill="#666">4</text></g><g transform="translate(1385.2,83.2)"><rect x="1" y="1" width="21" height="21" rx="2.5" fill="url(#gsq)" stroke="#111" stroke-width="0.8"/><rect x="3.5" y="4" width="16" height="4" fill="#e8e8e8" stroke="#333" stroke-width="0.6"/><rect x="3.5" y="9.5" width="16" height="4" fill="#e8e8e8" stroke="#333" stroke-width="0.6"/><rect x="3.5" y="15" width="16" height="4" fill="#e8e8e8" stroke="#333" stroke-width="0.6"/></g><g transform="translate(1423.8,55.5)"><rect x="1" y="1" width="21" height="21" rx="2.5" fill="url(#pink)" stroke="#111" stroke-width="0.8"/><path d="M1 15h21" stroke="#fff" stroke-width="0.9"/><circle cx="2" cy="15" r="1.8" fill="#fff" stroke="#000" stroke-width="0.6"/><circle cx="16" cy="15" r="1.8" fill="#fff" stroke="#000" stroke-width="0.6"/></g><g transform="translate(1423.8,83.2)"><rect x="1" y="1" width="21" height="21" rx="2.5" fill="#2a8a2a"/><rect x="1.00" y="1.00" width="5.3" height="5.3" fill="#1a5a1a"/><rect x="1.00" y="6.25" width="5.3" height="5.3" fill="#3ac84a"/><rect x="1.00" y="11.50" width="5.3" height="5.3" fill="#5ad84a"/><rect x="1.00" y="16.75" width="5.3" height="5.3" fill="#7ae85a"/><rect x="6.25" y="1.00" width="5.3" height="5.3" fill="#a8f070"/><rect x="6.25" y="6.25" width="5.3" height="5.3" fill="#4ae8a8"/><rect x="6.25" y="11.50" width="5.3" height="5.3" fill="#0a3a0a"/><rect x="6.25" y="16.75" width="5.3" height="5.3" fill="#1a5a1a"/><rect x="11.50" y="1.00" width="5.3" height="5.3" fill="#7ae85a"/><rect x="11.50" y="6.25" width="5.3" height="5.3" fill="#2a9a2a"/><rect x="11.50" y="11.50" width="5.3" height="5.3" fill="#1a7a2a"/><rect x="11.50" y="16.75" width="5.3" height="5.3" fill="#a8f070"/><rect x="16.75" y="1.00" width="5.3" height="5.3" fill="#1a5a1a"/><rect x="16.75" y="6.25" width="5.3" height="5.3" fill="#3ac84a"/><rect x="16.75" y="11.50" width="5.3" height="5.3" fill="#5ad84a"/><rect x="16.75" y="16.75" width="5.3" height="5.3" fill="#7ae85a"/><rect x="1" y="1" width="21" height="21" rx="2.5" fill="none" stroke="#111" stroke-width="0.8"/></g><g transform="translate(1459.0,55.5)"><path d="M9 13q1-7 6-10M16 14q-1-6-1-11" stroke="#6a0a0a" stroke-width="1" fill="none"/><path d="M10 4q4-5 7-2-4 4-7 2z" fill="#5aa830"/><circle cx="7" cy="16" r="4.3" fill="url(#chr)"/><circle cx="16.5" cy="17" r="4.3" fill="url(#chr)"/></g><g transform="translate(1459.0,83.2)"><rect x="0.5" y="0.5" width="22" height="22" rx="2.5" fill="url(#gsq)" stroke="#111" stroke-width="0.8"/><path d="M11.5 21v-8M11.5 13l-6-6M11.5 13l6-7M8 10l-5-2M15 10l5-4M11.5 15l-4-10M11.5 15l3-11" stroke="#111" stroke-width="1.4"/><path d="M6 21h11" stroke="#111" stroke-width="2"/></g><g transform="translate(1497.5,55.5)"><path d="M3 9h9V4l8 7.5-8 7.5v-5H3z" fill="#444" stroke="#777" stroke-width="0.9"/></g><g transform="translate(1497.5,83.2)"><path d="M3 9h9V4l8 7.5-8 7.5v-5H3z" fill="url(#arr)"/></g><g transform="translate(1534.8,55.5)"><ellipse cx="9" cy="9" rx="6" ry="5" fill="url(#arr)"/><ellipse cx="14" cy="14" rx="6" ry="5" fill="#e01870"/><ellipse cx="12.5" cy="12" rx="2" ry="1.6" fill="#600830"/></g><g transform="translate(1534.8,83.2)"><path d="M9.5 3h4v6l5.5 11H4l5.5-11z" fill="#eee" opacity=".7"/><path d="M6 14h11l2 6H4z" fill="#e8207a"/></g><path d="M1090.6 55v52" stroke="#5a5a5a" stroke-width="1"/><path d="M1184 55v52" stroke="#5a5a5a" stroke-width="1"/><path d="M1350.6 55v52" stroke="#5a5a5a" stroke-width="1"/><path d="M1417 55v52" stroke="#5a5a5a" stroke-width="1"/><path d="M1490.8 55v52" stroke="#5a5a5a" stroke-width="1"/><path d="M1528.7 55v52" stroke="#5a5a5a" stroke-width="1"/></svg>
<div class="a" style="left:1053px;top:136px;width:865px;height:30px;background:#1f1d26"></div>
<div class="a" style="left:1054.0px;top:142.2px;width:25.0px;height:19.5px;border-radius:5px;background:#4a4952"></div>
<div class="a" style="left:1081.0px;top:142.2px;width:25.6px;height:19.5px;border-radius:5px;background:#4a4952"></div>
<div class="a" style="left:1179.0px;top:142.2px;width:32.0px;height:19.5px;border-radius:5px;background:#4a4952"></div>
<div class="a" style="left:1222.0px;top:142.2px;width:32.0px;height:19.5px;border-radius:5px;background:#4a4952"></div>
<div class="a" style="left:1264.0px;top:142.2px;width:26.0px;height:19.5px;border-radius:5px;background:#4a4952"></div>
<div class="a" style="left:1700.0px;top:142.2px;width:25.6px;height:19.5px;border-radius:5px;background:#4a4952"></div>
<div class="a" style="left:1727.3px;top:142.2px;width:25.4px;height:19.5px;border-radius:5px;background:#4a4952"></div>
<div class="a" style="left:1795.0px;top:142.2px;width:25.5px;height:19.5px;border-radius:5px;background:#4a4952"></div>
<div class="a" style="left:1847.4px;top:142.2px;width:25.1px;height:19.5px;border-radius:5px;background:#4a4952"></div>
<div class="a" style="left:1878.4px;top:142.2px;width:31.3px;height:19.5px;border-radius:5px;background:#4a4952"></div>
<div class="a" style="left:1754.4px;top:142.2px;width:25.4px;height:19.5px;border-radius:5px;background:#0a6fe0"></div>
<div class="a" style="left:1821.7px;top:142.2px;width:24.8px;height:19.5px;border-radius:5px;background:#0a6fe0"></div>
<div class="a" style="left:1117px;top:141px;width:59px;height:21px;border-radius:5px;border:1px solid #3e3d46;background:#1f1d26"></div>
<div class="a" style="left:1158px;top:143px;width:16px;height:17px;border-radius:4px;background:#0a6fe0"></div>
<svg class="a" style="left:1160px;top:146px" width="12" height="10"><path d="M2.5 3.5l3.5 3.5 3.5-3.5" stroke="#fff" stroke-width="1.6" fill="none"/></svg>
<div class="t" style="left:1120px;top:145.8px;font-size:12.5px;line-height:12.5px;color:#e8e8e8;font-weight:normal;">80%</div>
<div class="a" style="left:1112px;top:145px;width:1px;height:15px;background:#3a3942"></div>
<div class="a" style="left:1788px;top:145px;width:1px;height:15px;background:#3a3942"></div>
<div class="a" style="left:1875px;top:145px;width:1px;height:15px;background:#3a3942"></div>
<svg class="a" style="left:1052px;top:136px" width="866" height="30" viewBox="1052 136 866 30"><defs><linearGradient id="fg" x1="0" y1="0" x2="0" y2="1"><stop offset="0" stop-color="#9ae070"/><stop offset="1" stop-color="#3a9a2a"/></linearGradient><radialGradient id="rs" cx=".35" cy=".35" r=".7"><stop offset="0" stop-color="#ff9a9a"/><stop offset=".5" stop-color="#e01010"/><stop offset="1" stop-color="#7a0000"/></radialGradient><radialGradient id="bs" cx=".35" cy=".35" r=".7"><stop offset="0" stop-color="#d0e8ff"/><stop offset=".6" stop-color="#5aa8f0"/><stop offset="1" stop-color="#2a6ac0"/></radialGradient></defs><path d="M1061 146h5l1 1.5h-6z" fill="#eee"/><path d="M1061 148h11v10h-11z" fill="url(#fg)"/><rect x="1087" y="145" width="13" height="13" rx="1" fill="#1a5ae8"/><rect x="1089" y="146" width="9" height="5" fill="#ddd"/><rect x="1090" y="154" width="6" height="4" fill="#1a3a9a"/><rect x="1091" y="154.5" width="2" height="3" fill="#ccc"/><path d="M1187 146h3M1187 146v3M1203 146h-3M1203 146v3M1187 158h3M1187 158v-3M1203 158h-3M1203 158v-3" stroke="#111" stroke-width="2"/><path d="M1193.5 150.5l3 3M1196.5 150.5l-3 3" stroke="#111" stroke-width="1"/><path d="M1230 152q8-7 16 0q-8 7-16 0z" fill="#fff"/><circle cx="1238" cy="152" r="3.6" fill="#2a9ae0"/><circle cx="1238" cy="152" r="1.6" fill="#0a2a4a"/><path d="M1270 158q3-6 6-3l8-10 2 2-9 10q-3 3-7 1z" fill="#d82020"/><path d="M1270 158q2-4 5-2" stroke="#5a0a0a" stroke-width="1.5" fill="none"/><path d="M1707 150l6-4 5 4-5 3z" fill="#eee"/><path d="M1707 151q5.5 6 11 0v3q-5.5 6-11 0z" fill="#222"/><rect x="1733" y="147" width="14" height="10" rx="3" transform="rotate(-40 1740 152)" fill="none" stroke="#222" stroke-width="1.3"/><rect x="1761" y="146.5" width="12" height="11" rx="3" transform="rotate(-40 1767 152)" fill="url(#rs)" stroke="#300" stroke-width="0.6"/><path d="M1801 147q5-3 9 2l2 6q-3 3-6 1z" fill="#1ab0b0" stroke="#034" stroke-width="0.7"/><rect x="1828" y="147" width="12" height="9" rx="3" transform="rotate(-35 1834 152)" fill="#7ad040" stroke="#234" stroke-width="0.6"/><path d="M1828 156l6-6" stroke="#eee" stroke-width="3"/><circle cx="1860" cy="152" r="6" fill="#eee"/><path d="M1860 146a6 6 0 0 0 0 12z" fill="#e06010"/><path d="M1894 146.5l4.5 2.5v5.5l-4.5 2.5-4.5-2.5v-5.5z" fill="url(#bs)"/></svg>
<div class="a" style="left:1053px;top:166px;width:866px;height:862px;background:#d9d4ce"></div>
<svg class="a" style="left:0;top:0" width="1920" height="1055" shape-rendering="crispEdges"><path d="M1120.5 166V1028M1239.5 166V1028M1359.5 166V1028M1478.5 166V1028M1598.5 166V1028M1718.5 166V1028M1837.5 166V1028M1053 178.5H1919M1053 217.5H1919M1053 257.5H1919M1053 297.5H1919M1053 337.5H1919M1053 377.5H1919M1053 417.5H1919M1053 457.5H1919M1053 496.5H1919M1053 536.5H1919M1053 576.5H1919M1053 616.5H1919M1053 656.5H1919M1053 696.5H1919M1053 736.5H1919M1053 776.5H1919M1053 815.5H1919M1053 855.5H1919M1053 895.5H1919M1053 935.5H1919M1053 975.5H1919M1053 1015.5H1919" stroke="#b9b5ae" stroke-width="1" fill="none"/></svg>
<div class="a" style="left:1053px;top:1028px;width:865px;height:24px;background:#1f1d26;border-radius:0 0 10px 0"></div>
<div class="t" style="left:1072px;top:1033.2px;font-size:12.5px;line-height:12.5px;color:#e8e8e8;font-weight:normal;">Autosave complete (160 seconds ago)</div>
<svg class="a" style="left:1055px;top:1031px" width="16" height="16"><circle cx="7" cy="8" r="6.5" fill="#2a5ae0"/><ellipse cx="7" cy="5.5" rx="2" ry="3" fill="#fff"/><ellipse cx="7" cy="11" rx="1.5" ry="1.8" fill="#fff"/><ellipse cx="7" cy="5.5" rx="1" ry="2" fill="#2a5ae0"/></svg>
<svg class="a" style="left:1855px;top:968px" width="60" height="55" viewBox="1855 968 60 55"><defs><radialGradient id="nw" cx=".5" cy=".5" r=".5"><stop offset="0" stop-color="#ececec"/><stop offset=".7" stop-color="#a0a0a0"/><stop offset="1" stop-color="#7a7a7a"/></radialGradient></defs><path d="M1861 983l7-1.5 2 5-4 2.5z" fill="#000"/><path d="M1868.6 996.5a21.5 21.5 0 0 1 42.2 -1" fill="none" stroke="#000" stroke-width="3.6"/><circle cx="1889.4" cy="998.5" r="20.6" fill="#000"/><circle cx="1889.4" cy="998.5" r="19.2" fill="url(#nw)" stroke="#fff" stroke-width="1.6"/><path d="M1872.5 987.5l5 4.5h-5z M1895.5 981l5.5 0.5-5 4.5z M1906 1007l-6.5-1 4 4.5z M1883 1015.5l-1-6-4.5 5z" fill="#fff"/></svg>
<div class="t" style="left:1850px;top:1033.5px;font-size:12px;line-height:12px;color:#e0e0e0;font-weight:normal;transform:translateX(-100%);">1.0.0007</div>
<div class="a" style="left:0;top:0;width:1920px;height:1055px;clip-path:inset(166px 1px 27px 1053px)">
<svg class="a" style="left:1053px;top:166px" width="865" height="862" viewBox="1053 166 865 862"><defs><linearGradient id="g1" gradientUnits="userSpaceOnUse" x1="1102" y1="0" x2="1670" y2="0"><stop offset="0" stop-color="#a8a99c"/><stop offset="0.3" stop-color="#9ea290"/><stop offset="0.45" stop-color="#8fa57a"/><stop offset="0.7" stop-color="#7ac04e"/><stop offset="1" stop-color="#78c449"/></linearGradient><linearGradient id="g2" gradientUnits="userSpaceOnUse" x1="1605" y1="0" x2="1670" y2="0"><stop offset="0" stop-color="#8c9482"/><stop offset="0.5" stop-color="#859a72"/><stop offset="1" stop-color="#74c048"/></linearGradient></defs><path d="M1000.0 533.0C1073.5 533.0 1073.5 537.0 1147.0 537.0" stroke="#555553" stroke-width="3.6" fill="none"/><path d="M1000.0 553.0C1073.5 553.0 1073.5 553.0 1147.0 553.0" stroke="#555553" stroke-width="3.6" fill="none"/><path d="M1000.0 583.0C1073.5 583.0 1073.5 569.0 1147.0 569.0" stroke="#555553" stroke-width="3.6" fill="none"/><path d="M1000.0 595.0C1079.2 595.0 1079.2 628.8 1158.5 628.8" stroke="#555553" stroke-width="3.6" fill="none"/><path d="M1000.0 643.0C1079.2 643.0 1079.2 646.6 1158.5 646.6" stroke="#555553" stroke-width="3.6" fill="none"/><path d="M1000.0 669.0C1079.2 669.0 1079.2 665.1 1158.5 665.1" stroke="#555553" stroke-width="3.6" fill="none"/><path d="M1246.6 632.8C1286.5 632.8 1286.5 649.9 1326.4 649.9" stroke="#555553" stroke-width="3.6" fill="none"/><path d="M1257.8 540.7C1379.5 540.7 1379.5 550.9 1501.3 550.9" stroke="#555553" stroke-width="3.6" fill="none"/><path d="M1424.5 663.4C1480.5 663.4 1445.3 571.6 1501.3 571.6" stroke="#555553" stroke-width="3.6" fill="none"/><path d="M1040.0 426.0C1042.2 427.0 1039.6 426.4 1053.0 431.9C1066.4 437.4 1096.7 449.3 1120.2 459.0C1143.7 468.7 1169.2 480.0 1193.8 490.0C1218.3 500.0 1233.1 505.8 1267.5 518.9C1301.9 532.0 1361.2 555.4 1400.0 568.8C1438.8 582.2 1466.9 590.4 1500.0 599.5C1533.1 608.6 1562.4 616.0 1598.7 623.2C1635.0 630.4 1664.5 636.9 1718.0 642.8C1771.5 648.7 1883.0 655.9 1920.0 658.6C1957.0 661.3 1936.7 659.1 1940.0 659.2" stroke="#505050" stroke-width="2.3" fill="none"/><path d="M1040.0 549.0C1042.1 549.7 1019.4 542.3 1052.6 553.3C1085.8 564.3 1193.9 599.5 1239.0 615.0C1284.1 630.5 1291.9 636.4 1323.0 646.3C1354.1 656.2 1380.8 663.4 1425.8 674.5C1470.8 685.6 1543.9 703.8 1593.3 713.2C1642.7 722.6 1667.5 726.1 1722.0 730.9C1776.5 735.7 1883.7 740.2 1920.0 742.2C1956.3 744.2 1936.7 742.9 1940.0 743.0" stroke="#505050" stroke-width="2.3" fill="none"/><path d="M1101.8 849.5C1214.1 849.5 1214.1 676.5 1326.4 676.5" stroke="#505050" stroke-width="2.3" fill="none"/><path d="M1102.3 725.1C1386.2 725.1 1386.2 592.8 1670.2 592.8" stroke="url(#g1)" stroke-width="3.6" fill="none"/><path d="M1605.0 561.6C1637.6 561.6 1637.6 577.0 1670.2 577.0" stroke="url(#g2)" stroke-width="3.6" fill="none"/><path d="M1780.5 577.0C1915.2 577.0 1915.2 600.0 2050.0 600.0" stroke="#76bd4a" stroke-width="3.8" fill="none"/></svg>
<div class="t" style="left:1146px;top:508.5px;font-size:10.3px;line-height:10.3px;color:#111;font-weight:normal;">Set the width of the cut in the edge</div>
<div class="t" style="left:1500.5px;top:520.1px;font-size:10.3px;line-height:10.3px;color:#111;font-weight:normal;">Extrude the cut width toward the set direction</div>
<div class="t" style="left:1667.5px;top:548.1px;font-size:10.3px;line-height:10.3px;color:#111;font-weight:normal;">Move the geometry 1 unit outside the polygon in set direction</div>
<div class="t" style="left:1322.5px;top:619.4px;font-size:10.3px;line-height:10.3px;color:#111;font-weight:normal;">Change length of vector to desired scale factor</div>
<div class="t" style="left:1054.4px;top:694.5px;font-size:10.3px;line-height:10.3px;color:#111;font-weight:normal;">from center to midpoint edge</div>
<div class="t" style="left:1053.6px;top:808.5px;font-size:10.3px;line-height:10.3px;color:#111;font-weight:normal;">the trim areas extend 1mm outside the shape for trim</div>
<div class="a" style="left:1147.1px;top:527.1px;width:110.7px;height:51.5px;background:linear-gradient(#eeeeee,#d3d3d3);border:1px solid #4d4d4d;border-radius:3px;box-shadow:0 0.5px 0 rgba(0,0,0,.15)"></div><div class="a" style="left:1191.1px;top:528.3px;width:19.7px;height:48.8px;background:#3b3b3b;border:1px solid #222;border-radius:3px"></div><div class="t" style="left:1200.9px;top:552.7px;font-size:10.5px;line-height:10.5px;color:#ffffff;font-weight:bold;transform:translate(-50%,-50%) rotate(-90deg)">Scale</div><div class="t" style="left:1188.1px;top:532.8px;font-size:8.5px;line-height:8.5px;color:#111;font-weight:normal;transform:translateX(-100%);">Geometry</div><div class="t" style="left:1188.1px;top:549.0px;font-size:8.5px;line-height:8.5px;color:#111;font-weight:normal;transform:translateX(-100%);">Center</div><div class="t" style="left:1188.1px;top:564.5px;font-size:8.5px;line-height:8.5px;color:#111;font-weight:normal;transform:translateX(-100%);">Factor</div><div class="t" style="left:1212.8px;top:536.5px;font-size:8.5px;line-height:8.5px;color:#111;font-weight:normal;">Geometry</div><div class="t" style="left:1212.8px;top:560.8px;font-size:8.5px;line-height:8.5px;color:#111;font-weight:normal;">Transform</div>
<div class="a" style="left:1158.4px;top:617.1px;width:88.2px;height:58.3px;background:linear-gradient(#eeeeee,#d3d3d3);border:1px solid #4d4d4d;border-radius:3px;box-shadow:0 0.5px 0 rgba(0,0,0,.15)"></div><div class="a" style="left:1192.0px;top:618.3px;width:19.5px;height:55.6px;background:#3b3b3b;border:1px solid #222;border-radius:3px"></div><div class="t" style="left:1201.8px;top:646.1px;font-size:10.5px;line-height:10.5px;color:#ffffff;font-weight:bold;transform:translate(-50%,-50%) rotate(-90deg)">Vector 2Pt</div><div class="t" style="left:1189px;top:624.5px;font-size:8.5px;line-height:8.5px;color:#111;font-weight:normal;transform:translateX(-100%);">Point A</div><div class="t" style="left:1189px;top:642.4px;font-size:8.5px;line-height:8.5px;color:#111;font-weight:normal;transform:translateX(-100%);">Point B</div><div class="t" style="left:1189px;top:660.9px;font-size:8.5px;line-height:8.5px;color:#111;font-weight:normal;transform:translateX(-100%);">Unitize</div><div class="t" style="left:1213.5px;top:628.5px;font-size:8.5px;line-height:8.5px;color:#111;font-weight:normal;">Vector</div><div class="t" style="left:1213.5px;top:655.9px;font-size:8.5px;line-height:8.5px;color:#111;font-weight:normal;">Length</div>
<div class="a" style="left:1326.4px;top:633.9px;width:98.1px;height:57.9px;background:linear-gradient(#aeaeba,#9a9aa6);border:1px solid #4d4d55;border-radius:3px;box-shadow:0 0.5px 0 rgba(0,0,0,.15)"></div><div class="a" style="left:1371.1px;top:635.1px;width:19.6px;height:55.2px;background:#3b3b3d;border:1px solid #222;border-radius:3px"></div><div class="t" style="left:1380.9px;top:662.7px;font-size:10.5px;line-height:10.5px;color:#ffffff;font-weight:bold;transform:translate(-50%,-50%) rotate(-90deg)">Amplitude</div><div class="t" style="left:1368.1px;top:645.6px;font-size:8.5px;line-height:8.5px;color:#111;font-weight:normal;transform:translateX(-100%);">Vector</div><div class="t" style="left:1368.1px;top:672.2px;font-size:8.5px;line-height:8.5px;color:#111;font-weight:normal;transform:translateX(-100%);">Amplitude</div><div class="t" style="left:1392.7px;top:659.1px;font-size:8.5px;line-height:8.5px;color:#111;font-weight:normal;">Vector</div>
<div class="a" style="left:1501.2px;top:538.1px;width:103.8px;height:46.0px;background:linear-gradient(#eeeeee,#d3d3d3);border:1px solid #4d4d4d;border-radius:3px;box-shadow:0 0.5px 0 rgba(0,0,0,.15)"></div><div class="a" style="left:1541.9px;top:539.3px;width:19.3px;height:43.3px;background:#3b3b3b;border:1px solid #222;border-radius:3px"></div><div class="t" style="left:1551.6px;top:561.0px;font-size:10.5px;line-height:10.5px;color:#ffffff;font-weight:bold;transform:translate(-50%,-50%) rotate(-90deg)">Extrude</div><div class="t" style="left:1538.9px;top:546.6px;font-size:8.5px;line-height:8.5px;color:#111;font-weight:normal;transform:translateX(-100%);">Base</div><div class="t" style="left:1538.9px;top:567.4px;font-size:8.5px;line-height:8.5px;color:#111;font-weight:normal;transform:translateX(-100%);">Direction</div><div class="t" style="left:1563.25px;top:557.4px;font-size:8.5px;line-height:8.5px;color:#111;font-weight:normal;">Extrusion</div>
<div class="a" style="left:1670.2px;top:567.1px;width:110.3px;height:35.6px;background:linear-gradient(#9be862,#84d852);border:1px solid #2f6a2a;border-radius:3px;box-shadow:0 0.5px 0 rgba(0,0,0,.15)"></div><div class="a" style="left:1714.2px;top:568.3px;width:19.3px;height:32.9px;background:#2b5a33;border:1px solid #222;border-radius:3px"></div><div class="t" style="left:1723.8px;top:584.8px;font-size:10.5px;line-height:10.5px;color:#c9f1cb;font-weight:bold;transform:translate(-50%,-50%) rotate(-90deg)">Move</div><div class="t" style="left:1711.2px;top:572.8px;font-size:8.5px;line-height:8.5px;color:#163510;font-weight:normal;transform:translateX(-100%);">Geometry</div><div class="t" style="left:1711.2px;top:588.5px;font-size:8.5px;line-height:8.5px;color:#163510;font-weight:normal;transform:translateX(-100%);">Motion</div><div class="t" style="left:1735.5px;top:572.8px;font-size:8.5px;line-height:8.5px;color:#163510;font-weight:normal;">Geometry</div><div class="t" style="left:1735.5px;top:588.5px;font-size:8.5px;line-height:8.5px;color:#163510;font-weight:normal;">Transform</div>
<div class="a" style="left:1045.0px;top:709.8px;width:57.3px;height:58.6px;background:linear-gradient(#eeeeee,#d3d3d3);border:1px solid #4d4d4d;border-radius:3px;box-shadow:0 0.5px 0 rgba(0,0,0,.15)"></div><div class="a" style="left:1053.0px;top:711.0px;width:14.5px;height:56.0px;background:#3b3b3b;border:1px solid #222;border-radius:3px"></div><div class="t" style="left:1060.2px;top:739.0px;font-size:10.5px;line-height:10.5px;color:#ffffff;font-weight:bold;transform:translate(-50%,-50%) rotate(-90deg)">Vector 2Pt</div><div class="t" style="left:1069.5px;top:720.9px;font-size:8.5px;line-height:8.5px;color:#111;font-weight:normal;">Vector</div><div class="t" style="left:1069.5px;top:748.5px;font-size:8.5px;line-height:8.5px;color:#111;font-weight:normal;">Length</div>
<div class="a" style="left:1045.0px;top:825.5px;width:56.8px;height:47.9px;background:linear-gradient(#eeeeee,#d3d3d3);border:1px solid #4d4d4d;border-radius:3px;box-shadow:0 0.5px 0 rgba(0,0,0,.15)"></div><div class="a" style="left:1053.0px;top:827.0px;width:15.4px;height:45.0px;background:#3b3b3b;border:1px solid #222;border-radius:3px"></div><div class="t" style="left:1060.7px;top:849.5px;font-size:10.5px;line-height:10.5px;color:#ffffff;font-weight:bold;transform:translate(-50%,-50%) rotate(-90deg)">Addition</div><div class="t" style="left:1070.4px;top:845.2px;font-size:8.5px;line-height:8.5px;color:#111;font-weight:normal;">Result</div>
<svg class="a" style="left:0;top:0" width="1920" height="1055"><path d="M1147.1 534.0a3 3 0 0 0 0 6M1147.1 550.2a3 3 0 0 0 0 6M1147.1 565.7a3 3 0 0 0 0 6M1257.8 537.7a3 3 0 0 1 0 6M1257.8 562.0a3 3 0 0 1 0 6M1158.4 625.8a3 3 0 0 0 0 6M1158.4 643.6a3 3 0 0 0 0 6M1158.4 662.1a3 3 0 0 0 0 6M1246.6 629.8a3 3 0 0 1 0 6M1246.6 657.1a3 3 0 0 1 0 6M1326.4 646.9a3 3 0 0 0 0 6M1326.4 673.5a3 3 0 0 0 0 6M1424.5 660.4a3 3 0 0 1 0 6M1501.2 547.9a3 3 0 0 0 0 6M1501.2 568.6a3 3 0 0 0 0 6M1605.0 558.6a3 3 0 0 1 0 6M1670.2 574.0a3 3 0 0 0 0 6M1670.2 589.8a3 3 0 0 0 0 6M1780.5 574.0a3 3 0 0 1 0 6M1780.5 589.8a3 3 0 0 1 0 6M1102.3 722.1a3 3 0 0 1 0 6M1102.3 749.7a3 3 0 0 1 0 6M1101.8 846.5a3 3 0 0 1 0 6" fill="#fff" stroke="#000" stroke-width="1.3"/></svg>
</div>
<div class="a" style="left:1051px;top:0;width:2px;height:1052px;background:#0b0b0b"></div>
<div class="a" style="left:1053px;top:1000px;width:7px;height:27px;background:#9a9a9a;border:1px solid #555"></div>

</body></html>
